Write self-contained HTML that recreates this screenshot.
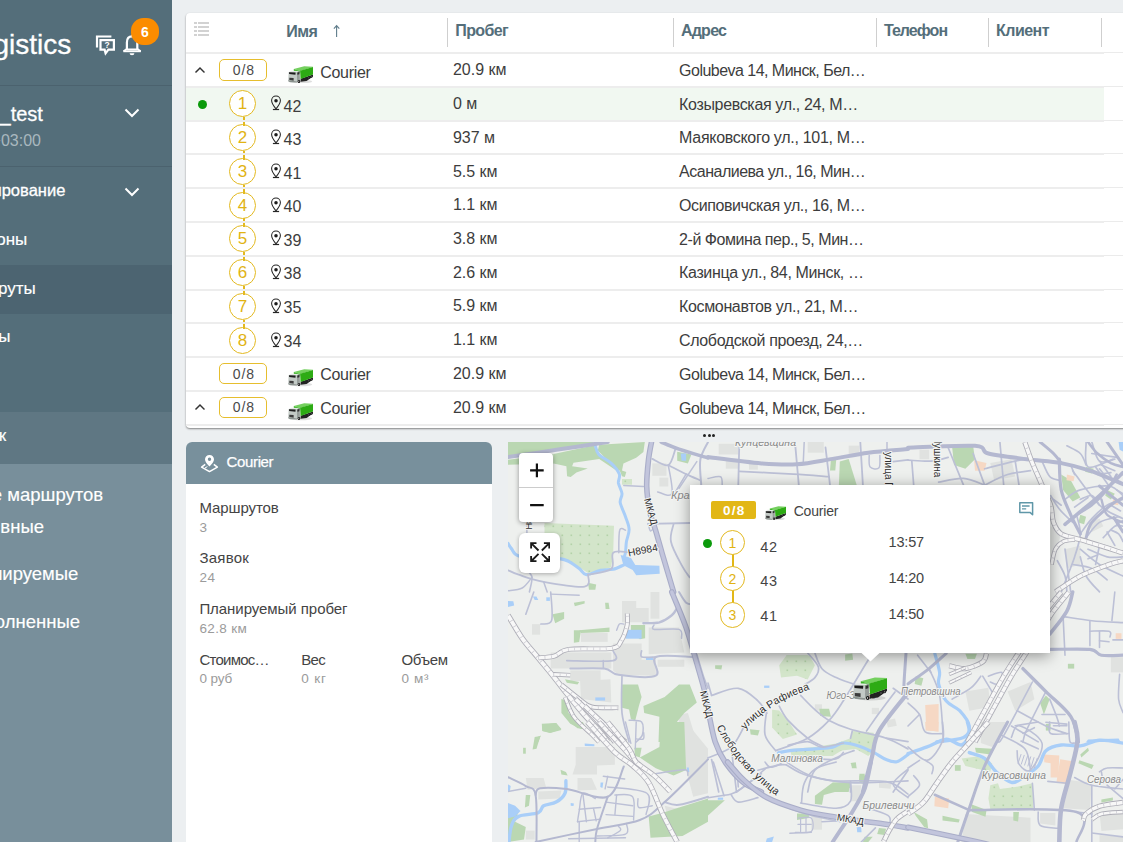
<!DOCTYPE html>
<html><head><meta charset="utf-8">
<style>
*{box-sizing:border-box;margin:0;padding:0}
html,body{width:1123px;height:842px;overflow:hidden;background:#eceff1;font-family:"Liberation Sans",sans-serif;color:#3a3a3a}
.abs{position:absolute}
.t{position:absolute;white-space:nowrap;line-height:1}
#side{position:absolute;left:0;top:0;width:172px;height:842px;background:#546e7a;overflow:hidden}
#side .t{color:#fff;-webkit-text-stroke:0.3px #fff}
#card{position:absolute;left:186px;top:13px;width:960px;height:414.8px;background:#fff;border-radius:4px;box-shadow:0 1px 2px rgba(0,0,0,.45)}
#card .t{color:#3d3d3d}
#card .h{color:#546e7a}
.vs{position:absolute;top:4.5px;width:1px;height:29.5px;background:#cfcfcf}
.sep{position:absolute;left:0;width:918px;height:2px;background:#ededed}
.sep2{position:absolute;left:918px;width:60px;height:1px;background:#ebebeb}
.badge{position:absolute;left:33px;width:48px;height:21.4px;border:1.8px solid #e6be2e;border-radius:5px}
.circ{position:absolute;width:27px;height:27px;border:1.5px solid #e3b920;border-radius:50%;background:#fff}
#panel{position:absolute;left:186px;top:442px;width:306px;height:420px;background:#fff;border-radius:6px 6px 0 0;overflow:hidden}
#panel .ph{position:absolute;left:0;top:0;width:306px;height:42px;background:#78909c}
#panel .l{color:#444}
#panel .v{color:#9b9b9b}
#map{position:absolute;left:508px;top:442px;width:615px;height:400px;background:#eef0ee;overflow:hidden}
#pop{position:absolute;left:690px;top:486px;width:360px;height:167px;background:#fff;box-shadow:0 3px 14px rgba(0,0,0,.4)}
</style></head><body>
<div id="side">
<div class="abs" style="left:0;top:264.7px;width:172px;height:49px;background:#4c6471"></div>
<div class="abs" style="left:0;top:411.5px;width:172px;height:53px;background:#5f7783"></div>
<div class="abs" style="left:0;top:464px;width:172px;height:400px;background:#788f9b"></div>
<div class="abs" style="left:0;top:84.5px;width:172px;height:1px;background:#4b626e"></div>
<div class="abs" style="left:0;top:165.5px;width:172px;height:1px;background:#4b626e"></div>
<div class="t" style="right:100.8px;top:31.0px;font-size:28px;">Logistics</div>
<div class="t" style="right:129.1px;top:104.0px;font-size:20px;">logistics_test</div>
<div class="t" style="right:131.0px;top:133.0px;font-size:16px;color:#a9b8bf;-webkit-text-stroke:0">UTC+03:00</div>
<div class="t" style="right:106.7px;top:182.0px;font-size:16.5px;">Планирование</div>
<div class="t" style="right:144.7px;top:231.0px;font-size:17px;-webkit-text-stroke:0.15px #fff">Районы</div>
<div class="t" style="right:136.2px;top:280.0px;font-size:17px;-webkit-text-stroke:0.15px #fff">Маршруты</div>
<div class="t" style="right:161.5px;top:328.0px;font-size:17px;-webkit-text-stroke:0.15px #fff">Заказы</div>
<div class="t" style="right:165.8px;top:427.0px;font-size:17px;-webkit-text-stroke:0.15px #fff">Поиск</div>
<div class="t" style="right:68.9px;top:486.0px;font-size:18.5px;-webkit-text-stroke:0.15px #fff">Состояние маршрутов</div>
<div class="t" style="right:128.0px;top:518.0px;font-size:18.5px;-webkit-text-stroke:0.15px #fff">Активные</div>
<div class="t" style="right:93.6px;top:565.0px;font-size:18.5px;-webkit-text-stroke:0.15px #fff">Планируемые</div>
<div class="t" style="right:92.0px;top:613.0px;font-size:18.5px;-webkit-text-stroke:0.15px #fff">Выполненные</div>
<svg class="abs" style="left:123px;top:106px" width="18" height="14" viewBox="0 0 18 14"><path d="M2.5 3.5 L9 10 L15.5 3.5" fill="none" stroke="#fff" stroke-width="2"/></svg>
<svg class="abs" style="left:123px;top:184.8px" width="18" height="14" viewBox="0 0 18 14"><path d="M2.5 3.5 L9 10 L15.5 3.5" fill="none" stroke="#fff" stroke-width="2"/></svg>
<svg class="abs" style="left:90px;top:12px" width="75" height="50" viewBox="90 12 75 50"><g fill="none" stroke="#fff" stroke-width="2.2"><path d="M97 47.4 V36.5 H111.4"/><path d="M100.5 40.1 H113.9 V49.6 H108.4 L105.6 53.3 L104.6 49.6 H100.5 Z" stroke-linejoin="miter"/><path d="M126.9 50 V42.5 C126.9 38.6 129 36.3 132.1 36.3 C135.2 36.3 137.3 38.6 137.3 42.5 V50"/><path d="M123.6 51.2 L126.2 49.4 H138 L140.6 51.2" stroke-width="2"/></g><path d="M123.3 50.4 H140.9 V52.2 H123.3 Z" fill="#fff"/><path d="M129.6 53.3 H134.4 A2.4 2 0 0 1 129.6 53.3 Z" fill="#fff"/><circle cx="132.1" cy="35.5" r="1.1" fill="#fff"/><text x="107.1" y="48.2" font-size="8.5" font-weight="bold" fill="#fff" text-anchor="middle" font-family="Liberation Sans, sans-serif">?</text></svg>
<div class="abs" style="left:131.2px;top:18.3px;width:27.6px;height:27.2px;border-radius:12.5px;background:#fb8c00"></div>
<div class="t" style="left:131.2px;width:27.6px;text-align:center;top:25px;font-size:14px;font-weight:bold;-webkit-text-stroke:0">6</div>
</div>
<div id="card">
<div class="abs" style="left:8.2px;top:8.5px;width:2.4px;height:2px;background:#d2d2d2"></div><div class="abs" style="left:12.0px;top:8.5px;width:11.2px;height:2px;background:#d2d2d2"></div>
<div class="abs" style="left:8.2px;top:12.7px;width:2.4px;height:2px;background:#d2d2d2"></div><div class="abs" style="left:12.0px;top:12.7px;width:11.2px;height:2px;background:#d2d2d2"></div>
<div class="abs" style="left:8.2px;top:16.9px;width:2.4px;height:2px;background:#d2d2d2"></div><div class="abs" style="left:12.0px;top:16.9px;width:11.2px;height:2px;background:#d2d2d2"></div>
<div class="abs" style="left:8.2px;top:21.1px;width:2.4px;height:2px;background:#d2d2d2"></div><div class="abs" style="left:12.0px;top:21.1px;width:11.2px;height:2px;background:#d2d2d2"></div>
<div class="t h" style="left:100.2px;top:11.00px;font-size:16px;letter-spacing:-0.536px;font-weight:700;">Имя</div>
<svg class="abs" style="left:146px;top:11.0px" width="10" height="14" viewBox="0 0 10 14"><path d="M4.6 13 V1.8 M1.9 4.6 L4.6 1.6 L7.3 4.6" fill="none" stroke="#607d8b" stroke-width="1.1"/></svg>
<div class="t h" style="left:269.3px;top:10.00px;font-size:16px;letter-spacing:-0.620px;font-weight:700;">Пробег</div>
<div class="t h" style="left:494.9px;top:10.00px;font-size:16px;letter-spacing:-0.745px;font-weight:700;">Адрес</div>
<div class="t h" style="left:697.9px;top:10.00px;font-size:16px;letter-spacing:-0.959px;font-weight:700;">Телефон</div>
<div class="t h" style="left:810.1px;top:10.00px;font-size:16px;letter-spacing:-0.534px;font-weight:700;">Клиент</div>
<div class="vs" style="left:261.1px"></div>
<div class="vs" style="left:486.9px"></div>
<div class="vs" style="left:689.6px"></div>
<div class="vs" style="left:802.0px"></div>
<div class="vs" style="left:915.0px"></div>
<div class="abs" style="left:0;top:74.8px;width:918px;height:31.8px;background:#f1f8f1"></div>
<div class="t " style="left:266.9px;top:49.00px;font-size:16px;letter-spacing:0.000px;">20.9 км</div>
<div class="t " style="left:493.1px;top:50.00px;font-size:16px;letter-spacing:-0.527px;">Golubeva 14, Минск, Бел…</div>
<svg class="abs" style="left:8.4px;top:52.5px" width="12" height="8" viewBox="0 0 12 8"><path d="M1.5 6.6 L6 2 L10.5 6.6" fill="none" stroke="#333" stroke-width="1.4"/></svg>
<div class="badge" style="top:46.3px"></div>
<div class="t " style="left:46.7px;top:50.00px;font-size:14px;letter-spacing:0.916px;color:#4a4a4a">0/8</div>
<svg class="abs" style="left:101.7px;top:52.7px" width="25.4" height="17.6" viewBox="0 0 766 535" preserveAspectRatio="none">
<ellipse cx="400" cy="470" rx="330" ry="55" fill="#000" opacity=".13"/>
<polygon points="380,390 765,255 765,312 560,455 380,482" fill="#222"/>
<polygon points="175,95 490,10 765,25 370,150" fill="#74d05e"/>
<polygon points="365,145 765,28 765,258 380,392" fill="#2dab14"/>
<polygon points="175,95 370,150 370,215 175,180" fill="#3db528"/>
<polygon points="25,175 100,142 355,152 270,192" fill="#e3e8e5"/>
<polygon points="20,185 270,190 270,482 60,472 5,440" fill="#c3cac6"/>
<polygon points="270,190 355,152 360,470 270,482" fill="#969d99"/>
<polygon points="30,192 230,197 225,264 35,247" fill="#1c1c1c"/>
<polygon points="282,202 345,177 345,252 282,267" fill="#2e2e2e"/>
<polygon points="40,355 170,365 170,447 40,427" fill="#3c3c3c"/>
<polygon points="5,432 270,472 270,505 60,492 5,462" fill="#8a928e"/>
<ellipse cx="330" cy="468" rx="38" ry="46" fill="#101010"/><ellipse cx="326" cy="468" rx="14" ry="21" fill="#c4c4c4"/>
<ellipse cx="630" cy="358" rx="30" ry="37" fill="#222"/><ellipse cx="627" cy="358" rx="12" ry="17" fill="#8a8a8a"/>
<ellipse cx="712" cy="328" rx="28" ry="35" fill="#222"/><ellipse cx="709" cy="328" rx="11" ry="16" fill="#8a8a8a"/>
</svg>
<div class="t " style="left:134.2px;top:52.00px;font-size:16px;letter-spacing:-0.295px;">Courier</div>
<div class="t " style="left:266.9px;top:83.00px;font-size:16px;letter-spacing:0.000px;">0 м</div>
<div class="t " style="left:493.1px;top:84.00px;font-size:16px;letter-spacing:-0.340px;">Козыревская ул., 24, М…</div>
<div class="circ" style="left:43.0px;top:77.2px"></div>
<div class="t" style="left:43.0px;width:27px;text-align:center;top:82px;font-size:17px;color:#e1b313">1</div>
<svg class="abs" style="left:83.6px;top:82.2px" width="12" height="16" viewBox="0 0 12 16"><path d="M6 1 C3.5 1 1.6 3 1.6 5.6 C1.6 8.8 6 13.8 6 13.8 C6 13.8 10.4 8.8 10.4 5.6 C10.4 3 8.5 1 6 1 Z" fill="none" stroke="#262626" stroke-width="1.05"/><circle cx="6" cy="5.7" r="1.75" fill="#1a1a1a"/><path d="M2.9 14.5 H9.1" stroke="#262626" stroke-width="1.2"/></svg>
<div class="t " style="left:97.6px;top:86.00px;font-size:16px;letter-spacing:0.000px;">42</div>
<div class="abs" style="left:12.0px;top:86.9px;width:9.2px;height:9.2px;border-radius:50%;background:#0b9a0b"></div>
<div class="t " style="left:266.9px;top:117.00px;font-size:16px;letter-spacing:0.000px;">937 м</div>
<div class="t " style="left:493.1px;top:117.00px;font-size:16px;letter-spacing:-0.300px;">Маяковского ул., 101, М…</div>
<div class="circ" style="left:43.0px;top:111.0px"></div>
<div class="t" style="left:43.0px;width:27px;text-align:center;top:116px;font-size:17px;color:#e1b313">2</div>
<svg class="abs" style="left:83.6px;top:116.0px" width="12" height="16" viewBox="0 0 12 16"><path d="M6 1 C3.5 1 1.6 3 1.6 5.6 C1.6 8.8 6 13.8 6 13.8 C6 13.8 10.4 8.8 10.4 5.6 C10.4 3 8.5 1 6 1 Z" fill="none" stroke="#262626" stroke-width="1.05"/><circle cx="6" cy="5.7" r="1.75" fill="#1a1a1a"/><path d="M2.9 14.5 H9.1" stroke="#262626" stroke-width="1.2"/></svg>
<div class="t " style="left:97.6px;top:119.00px;font-size:16px;letter-spacing:0.000px;">43</div>
<div class="t " style="left:266.9px;top:151.00px;font-size:16px;letter-spacing:0.000px;">5.5 км</div>
<div class="t " style="left:493.1px;top:151.00px;font-size:16px;letter-spacing:-0.502px;">Асаналиева ул., 16, Мин…</div>
<div class="circ" style="left:43.0px;top:144.8px"></div>
<div class="t" style="left:43.0px;width:27px;text-align:center;top:150px;font-size:17px;color:#e1b313">3</div>
<svg class="abs" style="left:83.6px;top:149.8px" width="12" height="16" viewBox="0 0 12 16"><path d="M6 1 C3.5 1 1.6 3 1.6 5.6 C1.6 8.8 6 13.8 6 13.8 C6 13.8 10.4 8.8 10.4 5.6 C10.4 3 8.5 1 6 1 Z" fill="none" stroke="#262626" stroke-width="1.05"/><circle cx="6" cy="5.7" r="1.75" fill="#1a1a1a"/><path d="M2.9 14.5 H9.1" stroke="#262626" stroke-width="1.2"/></svg>
<div class="t " style="left:97.6px;top:153.00px;font-size:16px;letter-spacing:0.000px;">41</div>
<div class="t " style="left:266.9px;top:184.00px;font-size:16px;letter-spacing:0.000px;">1.1 км</div>
<div class="t " style="left:493.1px;top:185.00px;font-size:16px;letter-spacing:-0.423px;">Осиповичская ул., 16, М…</div>
<div class="circ" style="left:43.0px;top:178.6px"></div>
<div class="t" style="left:43.0px;width:27px;text-align:center;top:184px;font-size:17px;color:#e1b313">4</div>
<svg class="abs" style="left:83.6px;top:183.6px" width="12" height="16" viewBox="0 0 12 16"><path d="M6 1 C3.5 1 1.6 3 1.6 5.6 C1.6 8.8 6 13.8 6 13.8 C6 13.8 10.4 8.8 10.4 5.6 C10.4 3 8.5 1 6 1 Z" fill="none" stroke="#262626" stroke-width="1.05"/><circle cx="6" cy="5.7" r="1.75" fill="#1a1a1a"/><path d="M2.9 14.5 H9.1" stroke="#262626" stroke-width="1.2"/></svg>
<div class="t " style="left:97.6px;top:186.00px;font-size:16px;letter-spacing:0.000px;">40</div>
<div class="t " style="left:266.9px;top:218.00px;font-size:16px;letter-spacing:0.000px;">3.8 км</div>
<div class="t " style="left:493.1px;top:219.00px;font-size:16px;letter-spacing:-0.460px;">2-й Фомина пер., 5, Мин…</div>
<div class="circ" style="left:43.0px;top:212.4px"></div>
<div class="t" style="left:43.0px;width:27px;text-align:center;top:217px;font-size:17px;color:#e1b313">5</div>
<svg class="abs" style="left:83.6px;top:217.4px" width="12" height="16" viewBox="0 0 12 16"><path d="M6 1 C3.5 1 1.6 3 1.6 5.6 C1.6 8.8 6 13.8 6 13.8 C6 13.8 10.4 8.8 10.4 5.6 C10.4 3 8.5 1 6 1 Z" fill="none" stroke="#262626" stroke-width="1.05"/><circle cx="6" cy="5.7" r="1.75" fill="#1a1a1a"/><path d="M2.9 14.5 H9.1" stroke="#262626" stroke-width="1.2"/></svg>
<div class="t " style="left:97.6px;top:220.00px;font-size:16px;letter-spacing:0.000px;">39</div>
<div class="t " style="left:266.9px;top:252.00px;font-size:16px;letter-spacing:0.000px;">2.6 км</div>
<div class="t " style="left:493.1px;top:252.00px;font-size:16px;letter-spacing:-0.365px;">Казинца ул., 84, Минск, …</div>
<div class="circ" style="left:43.0px;top:246.2px"></div>
<div class="t" style="left:43.0px;width:27px;text-align:center;top:251px;font-size:17px;color:#e1b313">6</div>
<svg class="abs" style="left:83.6px;top:251.2px" width="12" height="16" viewBox="0 0 12 16"><path d="M6 1 C3.5 1 1.6 3 1.6 5.6 C1.6 8.8 6 13.8 6 13.8 C6 13.8 10.4 8.8 10.4 5.6 C10.4 3 8.5 1 6 1 Z" fill="none" stroke="#262626" stroke-width="1.05"/><circle cx="6" cy="5.7" r="1.75" fill="#1a1a1a"/><path d="M2.9 14.5 H9.1" stroke="#262626" stroke-width="1.2"/></svg>
<div class="t " style="left:97.6px;top:253.00px;font-size:16px;letter-spacing:0.000px;">38</div>
<div class="t " style="left:266.9px;top:285.00px;font-size:16px;letter-spacing:0.000px;">5.9 км</div>
<div class="t " style="left:493.1px;top:286.00px;font-size:16px;letter-spacing:-0.365px;">Космонавтов ул., 21, М…</div>
<div class="circ" style="left:43.0px;top:280.0px"></div>
<div class="t" style="left:43.0px;width:27px;text-align:center;top:285px;font-size:17px;color:#e1b313">7</div>
<svg class="abs" style="left:83.6px;top:285.0px" width="12" height="16" viewBox="0 0 12 16"><path d="M6 1 C3.5 1 1.6 3 1.6 5.6 C1.6 8.8 6 13.8 6 13.8 C6 13.8 10.4 8.8 10.4 5.6 C10.4 3 8.5 1 6 1 Z" fill="none" stroke="#262626" stroke-width="1.05"/><circle cx="6" cy="5.7" r="1.75" fill="#1a1a1a"/><path d="M2.9 14.5 H9.1" stroke="#262626" stroke-width="1.2"/></svg>
<div class="t " style="left:97.6px;top:287.00px;font-size:16px;letter-spacing:0.000px;">35</div>
<div class="t " style="left:266.9px;top:319.00px;font-size:16px;letter-spacing:0.000px;">1.1 км</div>
<div class="t " style="left:493.1px;top:320.00px;font-size:16px;letter-spacing:-0.397px;">Слободской проезд, 24,…</div>
<div class="circ" style="left:43.0px;top:313.8px"></div>
<div class="t" style="left:43.0px;width:27px;text-align:center;top:319px;font-size:17px;color:#e1b313">8</div>
<svg class="abs" style="left:83.6px;top:318.8px" width="12" height="16" viewBox="0 0 12 16"><path d="M6 1 C3.5 1 1.6 3 1.6 5.6 C1.6 8.8 6 13.8 6 13.8 C6 13.8 10.4 8.8 10.4 5.6 C10.4 3 8.5 1 6 1 Z" fill="none" stroke="#262626" stroke-width="1.05"/><circle cx="6" cy="5.7" r="1.75" fill="#1a1a1a"/><path d="M2.9 14.5 H9.1" stroke="#262626" stroke-width="1.2"/></svg>
<div class="t " style="left:97.6px;top:321.00px;font-size:16px;letter-spacing:0.000px;">34</div>
<div class="t " style="left:266.9px;top:353.00px;font-size:16px;letter-spacing:0.000px;">20.9 км</div>
<div class="t " style="left:493.1px;top:354.00px;font-size:16px;letter-spacing:-0.510px;">Golubeva 14, Минск, Бел…</div>
<div class="badge" style="top:349.8px"></div>
<div class="t " style="left:46.7px;top:354.00px;font-size:14px;letter-spacing:0.916px;color:#4a4a4a">0/8</div>
<svg class="abs" style="left:101.7px;top:356.2px" width="25.4" height="17.6" viewBox="0 0 766 535" preserveAspectRatio="none">
<ellipse cx="400" cy="470" rx="330" ry="55" fill="#000" opacity=".13"/>
<polygon points="380,390 765,255 765,312 560,455 380,482" fill="#222"/>
<polygon points="175,95 490,10 765,25 370,150" fill="#74d05e"/>
<polygon points="365,145 765,28 765,258 380,392" fill="#2dab14"/>
<polygon points="175,95 370,150 370,215 175,180" fill="#3db528"/>
<polygon points="25,175 100,142 355,152 270,192" fill="#e3e8e5"/>
<polygon points="20,185 270,190 270,482 60,472 5,440" fill="#c3cac6"/>
<polygon points="270,190 355,152 360,470 270,482" fill="#969d99"/>
<polygon points="30,192 230,197 225,264 35,247" fill="#1c1c1c"/>
<polygon points="282,202 345,177 345,252 282,267" fill="#2e2e2e"/>
<polygon points="40,355 170,365 170,447 40,427" fill="#3c3c3c"/>
<polygon points="5,432 270,472 270,505 60,492 5,462" fill="#8a928e"/>
<ellipse cx="330" cy="468" rx="38" ry="46" fill="#101010"/><ellipse cx="326" cy="468" rx="14" ry="21" fill="#c4c4c4"/>
<ellipse cx="630" cy="358" rx="30" ry="37" fill="#222"/><ellipse cx="627" cy="358" rx="12" ry="17" fill="#8a8a8a"/>
<ellipse cx="712" cy="328" rx="28" ry="35" fill="#222"/><ellipse cx="709" cy="328" rx="11" ry="16" fill="#8a8a8a"/>
</svg>
<div class="t " style="left:134.2px;top:354.00px;font-size:16px;letter-spacing:-0.295px;">Courier</div>
<div class="t " style="left:266.9px;top:387.00px;font-size:16px;letter-spacing:0.000px;">20.9 км</div>
<div class="t " style="left:493.1px;top:388.00px;font-size:16px;letter-spacing:-0.510px;">Golubeva 14, Минск, Бел…</div>
<svg class="abs" style="left:8.4px;top:389.8px" width="12" height="8" viewBox="0 0 12 8"><path d="M1.5 6.6 L6 2 L10.5 6.6" fill="none" stroke="#333" stroke-width="1.4"/></svg>
<div class="badge" style="top:383.6px"></div>
<div class="t " style="left:46.7px;top:387.00px;font-size:14px;letter-spacing:0.916px;color:#4a4a4a">0/8</div>
<svg class="abs" style="left:101.7px;top:390.0px" width="25.4" height="17.6" viewBox="0 0 766 535" preserveAspectRatio="none">
<ellipse cx="400" cy="470" rx="330" ry="55" fill="#000" opacity=".13"/>
<polygon points="380,390 765,255 765,312 560,455 380,482" fill="#222"/>
<polygon points="175,95 490,10 765,25 370,150" fill="#74d05e"/>
<polygon points="365,145 765,28 765,258 380,392" fill="#2dab14"/>
<polygon points="175,95 370,150 370,215 175,180" fill="#3db528"/>
<polygon points="25,175 100,142 355,152 270,192" fill="#e3e8e5"/>
<polygon points="20,185 270,190 270,482 60,472 5,440" fill="#c3cac6"/>
<polygon points="270,190 355,152 360,470 270,482" fill="#969d99"/>
<polygon points="30,192 230,197 225,264 35,247" fill="#1c1c1c"/>
<polygon points="282,202 345,177 345,252 282,267" fill="#2e2e2e"/>
<polygon points="40,355 170,365 170,447 40,427" fill="#3c3c3c"/>
<polygon points="5,432 270,472 270,505 60,492 5,462" fill="#8a928e"/>
<ellipse cx="330" cy="468" rx="38" ry="46" fill="#101010"/><ellipse cx="326" cy="468" rx="14" ry="21" fill="#c4c4c4"/>
<ellipse cx="630" cy="358" rx="30" ry="37" fill="#222"/><ellipse cx="627" cy="358" rx="12" ry="17" fill="#8a8a8a"/>
<ellipse cx="712" cy="328" rx="28" ry="35" fill="#222"/><ellipse cx="709" cy="328" rx="11" ry="16" fill="#8a8a8a"/>
</svg>
<div class="t " style="left:134.2px;top:388.00px;font-size:16px;letter-spacing:-0.295px;">Courier</div>
<div class="abs" style="left:57.1px;top:103.9px;width:2px;height:9.0px;background:#e3b920"></div>
<div class="abs" style="left:57.1px;top:137.7px;width:2px;height:9.0px;background:#e3b920"></div>
<div class="abs" style="left:57.1px;top:171.5px;width:2px;height:9.0px;background:#e3b920"></div>
<div class="abs" style="left:57.1px;top:205.3px;width:2px;height:9.0px;background:#e3b920"></div>
<div class="abs" style="left:57.1px;top:239.1px;width:2px;height:9.0px;background:#e3b920"></div>
<div class="abs" style="left:57.1px;top:272.9px;width:2px;height:9.0px;background:#e3b920"></div>
<div class="abs" style="left:57.1px;top:306.7px;width:2px;height:9.0px;background:#e3b920"></div>
<div class="sep" style="top:39.0px"></div><div class="sep2" style="top:39.0px"></div>
<div class="sep" style="top:72.8px"></div><div class="sep2" style="top:72.8px"></div>
<div class="sep" style="top:106.6px"></div><div class="sep2" style="top:106.6px"></div>
<div class="sep" style="top:140.4px"></div><div class="sep2" style="top:140.4px"></div>
<div class="sep" style="top:174.2px"></div><div class="sep2" style="top:174.2px"></div>
<div class="sep" style="top:208.0px"></div><div class="sep2" style="top:208.0px"></div>
<div class="sep" style="top:241.8px"></div><div class="sep2" style="top:241.8px"></div>
<div class="sep" style="top:275.6px"></div><div class="sep2" style="top:275.6px"></div>
<div class="sep" style="top:309.4px"></div><div class="sep2" style="top:309.4px"></div>
<div class="sep" style="top:343.2px"></div><div class="sep2" style="top:343.2px"></div>
<div class="sep" style="top:377.0px"></div><div class="sep2" style="top:377.0px"></div>
<div class="sep" style="top:410.8px"></div><div class="sep2" style="top:410.8px"></div>
</div>
<div id="panel">
<div class="ph"></div>
<svg class="abs" style="left:14px;top:12.4px" width="19" height="19" viewBox="0 0 19 19"><path d="M9.5 0.9 C6.9 0.9 5 2.8 5 5.3 C5 8.4 9.5 12.6 9.5 12.6 C9.5 12.6 14 8.4 14 5.3 C14 2.8 12.1 0.9 9.5 0.9 Z M9.5 3.6 A1.7 1.7 0 1 1 9.5 7 A1.7 1.7 0 1 1 9.5 3.6 Z" fill="#fff" fill-rule="evenodd"/><path d="M5.2 10.4 L1.6 13.2 L9.5 17.6 L17.4 13.2 L13.8 10.4" fill="none" stroke="#fff" stroke-width="1.5" stroke-linejoin="round"/><path d="M5 14 L7.4 12.6" stroke="#fff" stroke-width="1"/></svg>
<div class="t " style="left:40.6px;top:12.00px;font-size:15px;letter-spacing:-0.365px;color:#fff;-webkit-text-stroke:0.25px #fff">Courier</div>
<div class="t l" style="left:13.4px;top:58.00px;font-size:15px;letter-spacing:-0.085px;">Маршрутов</div>
<div class="t v" style="left:13.4px;top:79.00px;font-size:13.5px;letter-spacing:0.000px;">3</div>
<div class="t l" style="left:13.4px;top:108.00px;font-size:15px;letter-spacing:0.253px;">Заявок</div>
<div class="t v" style="left:13.4px;top:129.00px;font-size:13.5px;letter-spacing:0.669px;">24</div>
<div class="t l" style="left:13.4px;top:159.00px;font-size:15px;letter-spacing:-0.052px;">Планируемый пробег</div>
<div class="t v" style="left:13.4px;top:180.00px;font-size:13.5px;letter-spacing:0.364px;">62.8 км</div>
<div class="t l" style="left:13.4px;top:210.00px;font-size:15px;letter-spacing:-0.746px;">Стоимос…</div>
<div class="t l" style="left:115.2px;top:210.00px;font-size:15px;letter-spacing:-0.580px;">Вес</div>
<div class="t l" style="left:215.5px;top:210.00px;font-size:15px;letter-spacing:-0.299px;">Объем</div>
<div class="t v" style="left:13.4px;top:230.00px;font-size:13.5px;letter-spacing:-0.088px;">0 руб</div>
<div class="t v" style="left:115.2px;top:230.00px;font-size:13.5px;letter-spacing:0.869px;">0 кг</div>
<div class="t v" style="left:215.5px;top:230.00px;font-size:13.5px;letter-spacing:0.651px;">0 м³</div>
</div>
<div id="map"><svg width="615" height="400" viewBox="508 442 615 400" style="position:absolute;left:0;top:0">
<defs><pattern id="dots" width="9" height="9" patternUnits="userSpaceOnUse"><rect width="9" height="9" fill="#d3e5ca"/><rect x="3.5" y="3.5" width="1.6" height="1.6" fill="#b3d2a8"/></pattern></defs>
<rect x="508" y="442" width="615" height="400" fill="#eef0ee"/>
<path d="M516.5,445.9 L530.8,444.5 L529.4,449.8 L518.0,450.9Z" fill="#e0e2e0"/>
<path d="M652.3,463.4 L666.5,463.4 L666.5,475.8 L652.3,475.8Z" fill="#e0e2e0"/>
<path d="M659.4,477.6 L668.3,477.6 L668.3,486.5 L659.4,486.5Z" fill="#e0e2e0"/>
<path d="M718.7,443.8 L738.3,443.8 L738.3,454.5 L718.7,454.5Z" fill="#e0e2e0"/>
<path d="M725.8,458.9 L738.3,458.9 L738.3,468.7 L725.8,468.7Z" fill="#e0e2e0"/>
<path d="M807.7,442.0 L823.8,442.0 L823.8,452.7 L807.7,452.7Z" fill="#e0e2e0"/>
<path d="M749.0,462.5 L757.9,462.5 L757.9,469.6 L749.0,469.6Z" fill="#e0e2e0"/>
<path d="M848.7,445.6 L859.4,445.6 L859.4,454.5 L848.7,454.5Z" fill="#e0e2e0"/>
<path d="M919.5,449.7 L929.1,449.7 L929.1,459.2 L919.5,459.2Z" fill="#e0e2e0"/>
<path d="M990.3,463.1 L1011.4,459.2 L1015.2,476.5 L994.2,480.3Z" fill="#e0e2e0"/>
<path d="M1088.0,522.4 L1099.5,518.6 L1103.3,526.2 L1091.8,532.0Z" fill="#e0e2e0"/>
<path d="M1050.6,526.2 L1061.2,532.0 L1057.3,549.2 L1050.6,556.9Z" fill="#e0e2e0"/>
<path d="M1065.0,549.2 L1080.3,545.4 L1080.3,564.5 L1066.9,568.4Z" fill="#e0e2e0"/>
<path d="M581.0,633.0 L607.7,633.0 L607.7,641.9 L581.0,641.9Z" fill="#e0e2e0"/>
<path d="M622.0,600.9 L636.2,600.9 L636.2,608.0 L648.7,608.0 L648.7,622.3 L622.0,622.3Z" fill="#e0e2e0"/>
<path d="M650.5,592.0 L659.4,592.0 L659.4,618.7 L650.5,618.7Z" fill="#e0e2e0"/>
<path d="M550.7,652.6 L611.3,652.6 L611.3,668.6 L550.7,668.6Z" fill="#e0e2e0"/>
<path d="M613.1,643.6 L641.6,643.6 L641.6,659.7 L655.8,659.7 L655.8,675.7 L618.4,674.8 L613.1,670.4Z" fill="#e0e2e0"/>
<path d="M648.7,627.6 L679.0,627.6 L684.3,652.6 L648.7,654.3Z" fill="#e0e2e0"/>
<path d="M580.1,681.0 L610.4,679.3 L611.3,702.4 L581.0,698.9Z" fill="#e0e2e0"/>
<path d="M570.3,670.4 L600.6,670.4 L600.6,681.0 L570.3,681.0Z" fill="#e0e2e0"/>
<path d="M657.6,659.7 L684.3,659.7 L684.3,666.8 L657.6,666.8Z" fill="#e0e2e0"/>
<path d="M532.0,624.1 L540.1,624.1 L540.1,634.7 L532.0,634.7Z" fill="#e0e2e0"/>
<path d="M677.2,714.9 L687.9,713.1 L696.8,742.0 L684.3,742.0Z" fill="#e0e2e0"/>
<path d="M814.9,704.3 L822.0,704.3 L822.0,710.6 L814.9,710.6Z" fill="#e0e2e0"/>
<path d="M871.8,707.9 L879.0,707.9 L879.0,714.1 L871.8,714.1Z" fill="#e0e2e0"/>
<path d="M886.1,720.4 L895.0,718.6 L896.8,725.7 L887.9,727.5Z" fill="#e0e2e0"/>
<path d="M965.4,691.6 L988.4,687.7 L990.3,706.9 L969.3,710.7Z" fill="#e0e2e0"/>
<path d="M1007.6,691.6 L1030.5,682.0 L1034.4,699.2 L1015.2,710.7Z" fill="#e0e2e0"/>
<path d="M1110.9,657.1 L1123.0,657.1 L1123.0,672.4 L1110.9,672.4Z" fill="#e0e2e0"/>
<path d="M575.7,746.9 L614.9,746.9 L614.9,764.7 L597.0,765.6 L597.0,774.5 L572.5,774.5 L575.7,764.7Z" fill="#e0e2e0"/>
<path d="M525.8,778.1 L543.6,778.1 L546.3,787.9 L527.6,789.7Z" fill="#e0e2e0"/>
<path d="M577.5,778.1 L591.7,778.1 L597.0,789.7 L577.5,790.6Z" fill="#e0e2e0"/>
<path d="M538.3,791.5 L561.4,790.6 L559.6,798.6 L538.3,799.5Z" fill="#e0e2e0"/>
<path d="M664.7,805.7 L679.0,809.3 L681.6,818.2 L668.3,819.1Z" fill="#e0e2e0"/>
<path d="M677.2,722.0 L686.1,722.0 L708.0,748.7 L708.0,793.2 L693.2,796.8 L686.1,770.1Z" fill="#e0e2e0"/>
<path d="M525.8,830.6 L534.7,830.6 L534.7,839.5 L525.8,839.5Z" fill="#e0e2e0"/>
<path d="M850.5,785.2 L861.2,785.2 L859.4,801.2 L850.5,801.2Z" fill="#e0e2e0"/>
<path d="M811.3,815.4 L822.0,815.4 L822.0,829.7 L811.3,829.7Z" fill="#e0e2e0"/>
<path d="M879.0,782.5 L891.4,783.4 L890.5,788.7 L879.0,787.8Z" fill="#e0e2e0"/>
<path d="M965.4,813.9 L1030.5,817.7 L1030.5,842.0 L961.6,842.0Z" fill="#e0e2e0"/>
<path d="M1040.1,812.9 L1055.4,812.9 L1055.4,825.4 L1040.1,823.5Z" fill="#e0e2e0"/>
<path d="M1066.9,779.4 L1091.8,783.3 L1089.9,810.1 L1063.1,808.2Z" fill="#e0e2e0"/>
<path d="M1099.5,812.0 L1123.0,813.9 L1123.0,829.2 L1101.4,831.1Z" fill="#e0e2e0"/>
<path d="M980.8,722.0 L1007.6,722.0 L992.2,746.9 L980.8,743.1Z" fill="#e0e2e0"/>
<path d="M1099.5,835.0 L1123.0,836.9 L1123.0,842.0 L1099.5,842.0Z" fill="#e0e2e0"/>
<path d="M508.0,442.0 L597.0,442.0 L561.4,449.1 L508.0,457.1Z" fill="#bad7b2"/>
<path d="M553.6,454.1 L593.5,445.6 L597.8,452.0 L607.7,460.5 L616.3,466.2 L622.0,463.4 L622.0,470.5 L616.3,470.5 L599.2,459.1 L573.5,462.7 L572.1,466.2 L587.8,468.4 L576.4,472.6 L570.7,476.9 L567.1,476.2 L566.4,466.2 L553.6,463.4Z" fill="#bad7b2"/>
<path d="M508.0,459.8 L553.6,454.1 L553.6,463.4 L508.0,464.8Z" fill="#bad7b2"/>
<path d="M599.2,444.8 L644.8,442.0 L643.4,452.0 L636.2,457.7 L623.4,463.4 L622.0,470.5 L626.3,471.9 L624.8,476.9 L622.0,476.2 L619.1,469.1 L607.7,460.5 L597.8,450.5Z" fill="#bad7b2"/>
<path d="M588.1,582.7 L596.2,584.5 L595.3,589.8 L589.0,589.8Z" fill="#bad7b2"/>
<path d="M677.2,451.8 L691.4,454.5 L687.9,463.4 L677.2,460.7Z" fill="#bad7b2"/>
<path d="M839.8,461.6 L848.7,458.9 L856.7,485.1 L838.9,485.1Z" fill="#bad7b2"/>
<path d="M830.9,459.8 L836.2,459.8 L835.3,470.5 L830.0,470.5Z" fill="#bad7b2"/>
<path d="M952.0,445.8 L973.1,445.8 L975.0,459.2 L965.4,468.8 L954.0,465.0Z" fill="#bad7b2"/>
<path d="M1061.2,474.5 L1070.7,480.3 L1080.3,497.5 L1072.7,501.4 L1063.1,489.9Z" fill="#bad7b2"/>
<path d="M1080.3,514.8 L1086.1,516.7 L1084.1,524.3 L1078.4,522.4Z" fill="#bad7b2"/>
<path d="M1107.1,489.9 L1114.8,493.7 L1110.9,499.4 L1105.2,495.6Z" fill="#bad7b2"/>
<path d="M1086.1,466.9 L1093.7,468.8 L1091.8,473.6 L1085.1,471.7Z" fill="#bad7b2"/>
<path d="M622.0,684.6 L638.0,684.6 L641.6,697.1 L638.9,706.0 L635.3,720.2 L630.9,719.3 L629.1,709.5 L622.0,707.8Z" fill="#bad7b2"/>
<path d="M643.4,706.0 L664.7,697.1 L679.0,684.6 L689.7,684.6 L696.8,702.4 L684.3,713.1 L675.4,723.8 L683.4,742.0 L658.5,742.0 L659.4,716.7 L644.2,713.1Z" fill="#bad7b2"/>
<path d="M561.4,698.9 L566.8,700.6 L568.6,713.1 L586.4,729.1 L581.0,729.1 L570.3,723.8 L561.4,713.1Z" fill="#bad7b2"/>
<path d="M542.7,724.7 L556.1,722.9 L561.4,729.1 L550.7,732.7 L542.7,730.9Z" fill="#bad7b2"/>
<path d="M552.5,614.3 L564.1,611.9 L564.1,618.7 L555.2,623.2Z" fill="#bad7b2"/>
<path d="M573.9,630.3 L581.0,630.3 L579.2,641.9 L573.9,642.8Z" fill="#bad7b2"/>
<path d="M579.2,630.3 L609.5,627.6 L609.5,632.1 L581.0,633.0Z" fill="#bad7b2"/>
<path d="M605.1,602.7 L608.6,602.7 L609.5,608.9 L605.6,608.9Z" fill="#bad7b2"/>
<path d="M573.9,602.7 L584.6,600.9 L584.6,603.6 L574.8,606.2Z" fill="#bad7b2"/>
<path d="M565.0,679.3 L579.2,681.9 L577.5,684.6 L566.8,682.8Z" fill="#bad7b2"/>
<path d="M535.6,738.0 L540.9,735.4 L538.3,742.0 L534.7,742.0Z" fill="#bad7b2"/>
<path d="M630.9,624.9 L645.1,624.9 L645.1,638.3 L639.8,639.2 L630.9,630.3Z" fill="#bad7b2"/>
<path d="M786.4,655.4 L807.7,655.4 L811.3,661.6 L786.4,662.5Z" fill="#bad7b2"/>
<path d="M776.6,720.4 L786.4,720.4 L793.5,734.6 L781.0,734.6Z" fill="#bad7b2"/>
<path d="M819.3,708.8 L829.1,708.8 L830.9,716.8 L820.2,715.9Z" fill="#bad7b2"/>
<path d="M715.1,665.2 L722.2,665.2 L721.4,669.6 L715.1,668.7Z" fill="#bad7b2"/>
<path d="M749.9,729.3 L759.6,730.2 L757.9,735.5 L750.7,734.6Z" fill="#bad7b2"/>
<path d="M845.1,654.5 L852.3,653.6 L853.1,659.8 L845.1,660.7Z" fill="#bad7b2"/>
<path d="M859.4,773.8 L864.7,773.8 L864.7,784.5 L859.4,782.7Z" fill="#bad7b2"/>
<path d="M832.7,782.7 L850.5,782.7 L848.7,792.0 L825.5,792.0Z" fill="#bad7b2"/>
<path d="M850.5,763.1 L855.8,762.2 L856.7,768.4 L852.3,766.7Z" fill="#bad7b2"/>
<path d="M915.7,676.2 L923.3,678.2 L921.4,685.8 L914.7,683.9Z" fill="#bad7b2"/>
<path d="M1067.9,663.8 L1074.2,663.8 L1074.2,668.6 L1067.9,668.6Z" fill="#bad7b2"/>
<path d="M1040.1,703.0 L1045.9,695.4 L1049.7,699.2 L1043.9,714.5Z" fill="#bad7b2"/>
<path d="M965.4,653.7 L976.9,653.7 L975.0,659.0 L967.4,659.0Z" fill="#bad7b2"/>
<path d="M1045.9,724.1 L1049.7,724.1 L1049.7,729.9 L1045.9,729.9Z" fill="#bad7b2"/>
<path d="M639.8,757.6 L659.4,746.9 L661.2,722.0 L684.3,722.0 L686.1,770.1 L673.6,775.4 L655.8,768.3Z" fill="#bad7b2"/>
<path d="M648.7,816.4 L662.9,812.8 L679.0,807.5 L708.0,798.6 L708.0,821.7 L682.5,836.0 L650.5,837.8Z" fill="#bad7b2"/>
<path d="M541.8,723.8 L556.1,722.9 L561.4,730.0 L549.9,733.0 L542.2,730.9Z" fill="#bad7b2"/>
<path d="M534.7,737.1 L540.4,735.9 L536.5,748.7 L532.6,749.6Z" fill="#bad7b2"/>
<path d="M523.1,747.8 L525.8,747.8 L525.8,753.7 L523.1,753.7Z" fill="#bad7b2"/>
<path d="M508.0,807.5 L518.7,811.0 L515.1,821.7 L525.8,827.1 L524.0,839.5 L508.0,842.0Z" fill="#bad7b2"/>
<path d="M525.8,795.0 L530.3,795.0 L529.0,805.7 L524.9,807.5Z" fill="#bad7b2"/>
<path d="M560.5,769.7 L565.9,771.9 L567.7,775.4 L561.4,774.5Z" fill="#bad7b2"/>
<path d="M569.4,722.0 L582.8,722.0 L586.4,729.1 L577.5,728.2Z" fill="#bad7b2"/>
<path d="M634.4,747.8 L641.6,747.8 L639.8,757.6 L634.8,755.8Z" fill="#bad7b2"/>
<path d="M708.0,800.3 L724.9,800.3 L708.0,815.4Z" fill="#bad7b2"/>
<path d="M832.7,782.5 L850.5,782.5 L850.5,787.8 L823.8,794.9 L822.0,804.7 L814.9,803.9 L814.9,795.8Z" fill="#bad7b2"/>
<path d="M859.4,775.4 L865.6,775.4 L864.7,781.6 L859.0,780.7Z" fill="#bad7b2"/>
<path d="M797.0,813.6 L809.5,813.6 L808.6,818.1 L797.0,819.9Z" fill="#bad7b2"/>
<path d="M879.0,827.9 L886.1,828.8 L884.3,835.0 L877.2,834.1Z" fill="#bad7b2"/>
<path d="M864.7,836.8 L872.7,836.8 L868.3,842.0 L862.9,842.0Z" fill="#bad7b2"/>
<path d="M851.4,764.7 L855.8,762.9 L855.8,768.2 L851.9,768.2Z" fill="#bad7b2"/>
<path d="M975.0,747.8 L992.2,748.8 L990.3,754.5 L976.0,752.6Z" fill="#bad7b2"/>
<path d="M954.9,765.1 L960.7,765.1 L960.7,770.8 L954.9,770.8Z" fill="#bad7b2"/>
<path d="M971.2,804.3 L986.5,810.1 L985.5,816.8 L972.1,812.0Z" fill="#bad7b2"/>
<path d="M1013.3,812.0 L1019.0,812.0 L1018.1,821.6 L1013.3,820.6Z" fill="#bad7b2"/>
<path d="M942.5,815.8 L959.7,819.6 L958.7,822.5 L942.5,820.6Z" fill="#bad7b2"/>
<path d="M913.7,812.0 L927.1,819.6 L928.1,828.3 L924.3,827.3 L915.7,815.8Z" fill="#bad7b2"/>
<path d="M1079.4,760.3 L1093.7,765.1 L1091.8,768.9 L1078.4,763.2Z" fill="#bad7b2"/>
<path d="M1080.3,754.5 L1088.0,747.8 L1088.9,750.7 L1081.3,757.4Z" fill="#bad7b2"/>
<path d="M1045.9,723.9 L1050.6,723.9 L1050.6,730.6 L1045.9,730.6Z" fill="#bad7b2"/>
<path d="M1101.4,799.5 L1112.9,797.6 L1112.9,800.5 L1101.4,802.4Z" fill="#bad7b2"/>
<path d="M622.0,479.0 L632.0,479.0 L632.0,484.7 L622.0,484.7Z" fill="url(#dots)"/>
<path d="M544.5,523.0 L614.0,525.7 L613.1,556.0 L610.9,567.6 L588.1,572.9 L578.3,566.7 L567.7,560.4 L544.5,556.0Z" fill="url(#dots)"/>
<path d="M786.4,655.4 L809.5,655.4 L814.9,665.2 L807.7,679.4 L797.0,675.8 L781.0,677.6 L779.2,665.2Z" fill="url(#dots)"/>
<path d="M789.9,748.9 L814.9,747.1 L836.2,743.5 L850.5,738.2 L852.3,731.0 L873.6,732.8 L875.4,748.9 L868.3,756.0 L855.8,748.9 L841.6,750.6 L832.7,756.0 L791.7,756.0Z" fill="url(#dots)"/>
<path d="M772.1,709.7 L779.2,710.6 L788.1,720.4 L797.0,734.6 L782.8,739.1 L772.1,727.5Z" fill="url(#dots)"/>
<path d="M990.3,785.2 L998.0,783.3 L999.9,789.0 L1015.2,787.1 L1032.4,783.3 L1033.4,810.1 L990.3,809.1 L988.4,798.6Z" fill="url(#dots)"/>
<path d="M961.6,758.4 L976.9,756.5 L992.2,763.2 L990.3,771.8 L965.4,766.0Z" fill="url(#dots)"/>
<path d="M974.1,460.2 L986.5,463.1 L984.6,470.7 L975.0,470.7Z" fill="#f6d8c4"/>
<path d="M1066.9,474.5 L1074.6,476.5 L1073.6,481.2 L1066.5,480.3Z" fill="#f6d8c4"/>
<path d="M1112.9,499.4 L1118.6,500.4 L1118.2,505.2 L1112.5,504.2Z" fill="#f6d8c4"/>
<path d="M925.2,705.0 L938.6,704.0 L938.6,731.8 L926.2,729.9Z" fill="#f6d8c4"/>
<path d="M1115.7,633.2 L1121.5,633.2 L1121.5,638.9 L1115.7,638.9Z" fill="#f6d8c4"/>
<path d="M1043.9,754.5 L1059.3,755.5 L1058.3,777.5 L1050.6,777.5 L1050.6,763.2 L1044.3,762.2Z" fill="#f6d8c4"/>
<path d="M1060.2,759.3 L1072.7,761.2 L1066.9,784.2 L1056.4,782.3Z" fill="#f6d8c4"/>
<path d="M934.8,796.7 L949.2,798.6 L948.2,808.2 L934.4,806.2Z" fill="#f6d8c4"/>
<path d="M925.2,722.0 L938.6,722.0 L937.7,731.2 L925.6,730.6Z" fill="#f6d8c4"/>
<path d="M620.6,555.1 L630.9,557.8 L635.3,564.9 L659.4,565.8 L659.7,573.8 L636.2,575.2 L632.7,569.9 L623.4,565.2Z" fill="#a9cef8"/>
<path d="M680.8,453.6 L686.1,453.6 L686.1,460.7 L681.6,460.7Z" fill="#a9cef8"/>
<path d="M1118.6,442.0 L1123.0,442.0 L1123.0,451.6 L1119.6,449.7Z" fill="#a9cef8"/>
<path d="M625.5,629.8 L641.6,629.8 L641.6,638.7 L625.5,638.7Z" fill="#a9cef8"/>
<path d="M508.0,600.9 L513.3,601.3 L514.2,605.4 L508.0,607.1Z" fill="#a9cef8"/>
<path d="M595.3,697.4 L605.1,697.4 L605.1,700.6 L595.3,700.6Z" fill="#a9cef8"/>
<path d="M532.9,596.5 L536.5,596.5 L538.3,600.0 L534.7,600.0Z" fill="#a9cef8"/>
<path d="M546.3,597.3 L549.9,597.3 L549.9,600.9 L546.3,600.9Z" fill="#a9cef8"/>
<path d="M646.0,657.9 L653.1,657.9 L653.1,660.0 L646.0,660.0Z" fill="#a9cef8"/>
<path d="M764.1,685.6 L769.4,685.6 L769.4,687.9 L764.1,687.9Z" fill="#a9cef8"/>
<path d="M1088.0,739.4 L1118.6,738.5 L1120.5,741.9 L1086.1,741.9Z" fill="#a9cef8"/>
<path d="M508.0,803.0 L515.1,805.7 L520.5,811.0 L515.1,816.4 L508.0,818.2Z" fill="#a9cef8"/>
<path d="M508.0,784.3 L510.7,786.1 L509.8,791.5 L508.0,791.8Z" fill="#a9cef8"/>
<path d="M584.6,743.4 L594.4,744.3 L594.4,746.2 L584.9,745.9Z" fill="#a9cef8"/>
<path d="M600.6,782.6 L603.3,782.6 L602.4,787.9 L600.3,787.0Z" fill="#a9cef8"/>
<path d="M570.7,803.0 L573.9,803.6 L573.5,806.1 L570.7,805.7Z" fill="#a9cef8"/>
<path d="M686.6,767.4 L688.8,767.4 L689.3,771.9 L687.0,771.9Z" fill="#a9cef8"/>
<path d="M856.7,827.0 L861.2,827.0 L861.5,832.3 L857.2,832.3Z" fill="#a9cef8"/>
<path d="M766.8,838.6 L773.9,836.4 L772.1,842.0 L765.9,842.0Z" fill="#a9cef8"/>
<path d="M717.8,797.6 L723.1,797.6 L723.1,799.8 L717.8,799.8Z" fill="#a9cef8"/>
<g fill="none" stroke-linecap="round" stroke-linejoin="round">
<path d="M595.3,445.6 C595.9,447.0 596.2,451.5 598.8,454.5 C601.5,457.4 607.9,460.1 611.3,463.4 C614.7,466.6 618.1,470.8 619.3,474.1 C620.5,477.3 618.0,479.7 618.4,483.0 C618.9,486.2 621.7,490.4 622.0,493.6 C622.3,496.9 619.6,498.7 620.2,502.6 C620.8,506.4 624.1,512.3 625.5,516.8 C627.0,521.3 629.0,525.1 629.1,529.3 C629.3,533.4 627.0,537.9 626.4,541.7 C625.8,545.6 626.0,549.7 625.5,552.4 C625.1,555.1 624.1,556.9 623.8,557.8" stroke="#a9cef8" stroke-width="3"/>
<path d="M623.8,564.9 C622.0,565.6 616.9,568.4 613.1,569.3 C609.2,570.2 605.1,569.3 600.6,570.2 C596.2,571.1 589.9,575.0 586.4,574.7 C582.8,574.4 582.2,570.7 579.2,568.4 C576.3,566.2 571.8,563.0 568.6,561.3 C565.3,559.7 563.8,559.2 559.6,558.7 C555.5,558.1 550.4,558.2 543.6,557.8 C536.8,557.3 524.0,557.5 518.7,556.0 C513.3,554.5 513.3,550.9 511.6,548.9 C509.8,546.8 508.6,544.4 508.0,543.5" stroke="#a9cef8" stroke-width="3.2"/>
<path d="M778.3,752.8 C780.3,752.4 783.8,751.3 789.9,750.6 C796.0,750.0 807.7,749.5 814.9,748.9 C822.0,748.3 827.9,748.1 832.7,747.1 C837.4,746.1 838.9,743.1 843.4,743.0 C847.8,742.8 854.3,744.6 859.4,746.2 C864.4,747.8 869.2,750.2 873.6,752.4 C878.1,754.6 882.2,758.0 886.1,759.5 C890.0,761.1 893.1,762.5 896.8,761.7 C900.4,760.8 906.1,755.7 908.0,754.6" stroke="#a9cef8" stroke-width="3.2"/>
<path d="M934.8,653.3 C935.6,656.5 939.0,667.3 939.6,672.4 C940.2,677.5 937.5,679.1 938.6,683.9 C939.8,688.7 942.8,696.7 946.3,701.1 C949.8,705.6 955.9,706.6 959.7,710.7 C963.5,714.9 968.6,721.6 969.3,726.0 C969.9,730.5 968.9,734.9 963.5,737.5 C958.1,740.2 941.2,741.2 936.7,741.9" stroke="#a9cef8" stroke-width="3.2"/>
<path d="M565.9,780.8 C565.7,782.8 566.6,789.7 565.0,793.2 C563.4,796.8 559.6,800.1 556.1,802.1 C552.5,804.2 546.6,803.9 543.6,805.7 C540.7,807.5 542.4,811.0 538.3,812.8 C534.1,814.6 523.1,814.3 518.7,816.4 C514.2,818.5 513.2,821.0 511.6,825.3 C509.9,829.6 509.3,839.2 508.9,842.0" stroke="#a9cef8" stroke-width="3.4"/>
<path d="M967.4,722.0 C967.7,723.9 970.2,729.7 969.3,733.5 C968.3,737.3 965.4,744.0 961.6,745.0 C957.8,745.9 952.0,738.9 946.3,739.2 C940.5,739.6 933.5,744.5 927.1,746.9 C920.8,749.3 911.2,752.5 908.0,753.6" stroke="#a9cef8" stroke-width="3.4"/>
<path d="M969.3,752.6 C971.8,753.6 980.1,755.2 984.6,758.4 C989.1,761.6 991.6,767.8 996.1,771.8 C1000.5,775.8 1006.9,781.4 1011.4,782.3 C1015.9,783.3 1018.4,780.2 1022.9,777.5 C1027.3,774.8 1034.4,770.5 1038.2,766.0 C1042.0,761.6 1042.0,754.2 1045.9,750.7 C1049.7,747.2 1055.4,745.8 1061.2,745.0 C1066.9,744.2 1073.9,746.7 1080.3,745.9 C1086.7,745.1 1092.3,740.7 1099.5,740.2 C1106.6,739.7 1119.1,742.6 1123.0,743.1" stroke="#a9cef8" stroke-width="3.4"/>
<path d="M588.1,574.7 C592.0,573.7 607.1,572.5 611.3,568.8 C615.5,565.2 610.3,555.6 613.1,552.8 C615.8,550.0 625.2,552.2 627.7,552.1" stroke="#bcc0d6" stroke-width="1.8"/>
<path d="M618.8,552.8 C618.9,549.0 618.5,533.9 619.7,530.2 C620.8,526.4 624.6,530.2 625.5,530.2" stroke="#bcc0d6" stroke-width="1.5"/>
<path d="M508.0,570.2 C509.8,571.0 512.7,572.8 518.7,574.7 C524.6,576.6 532.6,579.8 543.6,581.8 C554.6,583.8 577.2,587.8 584.6,586.6 C592.0,585.4 587.5,576.7 588.1,574.7" stroke="#bcc0d6" stroke-width="1.8"/>
<path d="M529.4,592.0 C529.8,589.5 532.3,581.6 532.0,577.4 C531.8,573.1 528.8,575.9 527.9,566.7 C527.1,557.5 526.9,529.6 526.7,522.1" stroke="#bcc0d6" stroke-width="1.6"/>
<path d="M543.6,581.8 L547.2,592.0" stroke="#bcc0d6" stroke-width="1.5"/>
<path d="M508.0,590.7 C510.4,590.3 518.2,590.3 522.2,588.0 C526.3,585.8 530.4,579.1 532.0,577.4" stroke="#bcc0d6" stroke-width="1.5"/>
<path d="M623.8,485.6 L643.4,486.5" stroke="#bcc0d6" stroke-width="1.5"/>
<path d="M647.8,523.9 L689.7,523.0" stroke="#bcc0d6" stroke-width="1.8"/>
<path d="M673.6,523.9 C673.2,526.9 669.5,534.6 671.0,541.7 C672.4,548.9 679.4,560.7 682.5,566.7 C685.6,572.6 688.5,575.6 689.7,577.4" stroke="#bcc0d6" stroke-width="1.8"/>
<path d="M654.4,527.5 C653.7,528.1 651.4,531.3 650.5,531.0 C649.5,530.8 649.0,526.6 648.7,525.7" stroke="#bcc0d6" stroke-width="1.5"/>
<path d="M708.0,442.0 C706.7,445.0 701.5,452.7 700.3,459.8 C699.2,466.9 701.1,480.6 701.2,484.7" stroke="#bcc0d6" stroke-width="2"/>
<path d="M675.4,449.1 C674.2,451.8 672.1,463.5 668.3,465.2 C664.4,466.8 654.9,460.0 652.3,458.9" stroke="#bcc0d6" stroke-width="1.8"/>
<path d="M668.3,465.2 C671.3,466.6 680.8,471.5 686.1,474.1 C691.4,476.6 698.0,479.3 700.3,480.3" stroke="#bcc0d6" stroke-width="1.8"/>
<path d="M686.1,474.1 L675.4,491.9" stroke="#bcc0d6" stroke-width="1.5"/>
<path d="M696.8,461.6 L679.0,488.3" stroke="#bcc0d6" stroke-width="1.5"/>
<path d="M668.3,465.2 C668.9,469.9 673.6,489.2 671.8,493.6 C670.1,498.1 660.0,492.2 657.6,491.9" stroke="#bcc0d6" stroke-width="1.5"/>
<path d="M739.2,447.3 L738.3,485.1" stroke="#bcc0d6" stroke-width="1.8"/>
<path d="M795.3,445.6 L798.8,485.1" stroke="#bcc0d6" stroke-width="1.8"/>
<path d="M804.2,442.0 L803.3,461.6" stroke="#bcc0d6" stroke-width="1.5"/>
<path d="M825.5,447.3 L830.0,485.1" stroke="#bcc0d6" stroke-width="1.8"/>
<path d="M860.3,442.0 L862.9,485.1" stroke="#bcc0d6" stroke-width="1.8"/>
<path d="M887.0,442.0 L887.0,450.9" stroke="#bcc0d6" stroke-width="1.5"/>
<path d="M739.2,471.4 C748.2,471.8 778.5,473.2 793.5,474.1 C808.5,474.9 823.2,476.3 829.1,476.7" stroke="#bcc0d6" stroke-width="1.8"/>
<path d="M708.0,478.5 C710.1,478.2 718.1,475.6 720.5,476.7 C722.8,477.8 722.0,483.7 722.2,485.1" stroke="#bcc0d6" stroke-width="1.5"/>
<path d="M869.2,455.4 C869.3,457.3 868.4,464.9 870.1,466.9 C871.7,469.0 877.3,469.8 879.0,467.8 C880.6,465.9 879.7,457.4 879.9,455.4" stroke="#bcc0d6" stroke-width="1.5"/>
<path d="M893.2,461.6 L908.0,459.8" stroke="#bcc0d6" stroke-width="1.8"/>
<path d="M948.2,447.7 L963.5,485.1" stroke="#bcc0d6" stroke-width="1.7"/>
<path d="M911.8,461.1 L913.7,485.1" stroke="#bcc0d6" stroke-width="1.7"/>
<path d="M973.1,453.5 L984.6,485.1" stroke="#bcc0d6" stroke-width="1.7"/>
<path d="M999.9,442.0 L1003.7,485.1" stroke="#bcc0d6" stroke-width="1.7"/>
<path d="M1015.2,461.1 L1019.0,485.1" stroke="#bcc0d6" stroke-width="1.7"/>
<path d="M984.6,468.8 C989.7,467.5 1007.6,462.7 1015.2,461.1 C1022.9,459.6 1028.0,459.6 1030.5,459.2" stroke="#bcc0d6" stroke-width="1.7"/>
<path d="M1072.7,470.7 C1077.1,476.5 1091.1,497.2 1099.5,505.2 C1107.9,513.2 1119.1,516.4 1123.0,518.6" stroke="#bcc0d6" stroke-width="1.7"/>
<path d="M1086.1,442.0 C1086.4,446.1 1083.5,464.0 1088.0,466.9 C1092.4,469.8 1108.7,460.5 1112.9,459.2" stroke="#bcc0d6" stroke-width="1.7"/>
<path d="M1065.0,499.4 C1067.6,497.8 1073.0,492.1 1080.3,489.9 C1087.7,487.6 1101.9,485.1 1109.0,486.0 C1116.1,487.0 1120.7,494.0 1123.0,495.6" stroke="#bcc0d6" stroke-width="1.7"/>
<path d="M1109.0,486.0 L1095.6,466.9" stroke="#bcc0d6" stroke-width="1.7"/>
<path d="M1080.3,533.9 C1082.2,531.3 1087.3,523.4 1091.8,518.6 C1096.3,513.8 1101.9,508.4 1107.1,505.2 C1112.3,502.0 1120.4,500.4 1123.0,499.4" stroke="#bcc0d6" stroke-width="1.7"/>
<path d="M1086.1,537.7 C1088.3,535.2 1094.0,525.9 1099.5,522.4 C1104.9,518.9 1115.4,517.6 1118.6,516.7" stroke="#bcc0d6" stroke-width="1.7"/>
<path d="M1103.3,537.7 C1105.2,535.8 1111.5,528.2 1114.8,526.2 C1118.1,524.3 1121.6,526.2 1123.0,526.2" stroke="#bcc0d6" stroke-width="1.7"/>
<path d="M908.0,460.2 C911.8,460.3 924.3,461.6 931.0,461.1 C937.7,460.7 945.3,458.0 948.2,457.3" stroke="#bcc0d6" stroke-width="1.7"/>
<path d="M938.6,482.2 C942.8,481.6 955.9,477.9 963.5,478.4 C971.2,478.9 981.1,484.0 984.6,485.1" stroke="#bcc0d6" stroke-width="1.7"/>
<path d="M984.6,485.1 C988.4,483.3 999.9,476.9 1007.6,474.5 C1015.2,472.2 1026.7,471.4 1030.5,470.7" stroke="#bcc0d6" stroke-width="1.7"/>
<path d="M1076.5,514.8 C1077.1,517.9 1080.6,526.9 1080.3,533.9 C1080.0,540.9 1077.8,547.2 1074.6,556.9 C1071.4,566.5 1063.4,586.1 1061.2,591.9" stroke="#bcc0d6" stroke-width="1.7"/>
<path d="M1065.0,549.2 L1070.7,591.9" stroke="#bcc0d6" stroke-width="1.7"/>
<path d="M1080.3,549.2 C1083.5,551.8 1092.3,560.1 1099.5,564.5 C1106.6,569.0 1119.1,574.1 1123.0,576.0" stroke="#bcc0d6" stroke-width="1.7"/>
<path d="M1091.8,442.0 C1093.1,445.2 1095.6,458.3 1099.5,461.1 C1103.3,464.0 1112.2,459.6 1114.8,459.2" stroke="#bcc0d6" stroke-width="1.7"/>
<path d="M1099.5,461.1 L1110.9,476.5" stroke="#bcc0d6" stroke-width="1.7"/>
<path d="M1050.6,495.6 C1052.1,497.8 1055.6,504.5 1059.3,509.0 C1062.9,513.5 1070.4,520.2 1072.7,522.4" stroke="#bcc0d6" stroke-width="1.7"/>
<path d="M1050.6,518.6 L1061.2,532.0" stroke="#bcc0d6" stroke-width="1.7"/>
<path d="M1088.0,549.2 C1091.2,550.5 1101.3,555.6 1107.1,556.9 C1113.0,558.2 1120.4,556.9 1123.0,556.9" stroke="#bcc0d6" stroke-width="1.7"/>
<path d="M1099.5,545.4 L1095.6,564.5" stroke="#bcc0d6" stroke-width="1.7"/>
<path d="M1091.8,453.5 L1116.7,457.3" stroke="#bcc0d6" stroke-width="1.7"/>
<path d="M1101.4,465.0 L1114.8,470.7" stroke="#bcc0d6" stroke-width="1.7"/>
<path d="M1099.5,468.8 L1107.1,478.4" stroke="#bcc0d6" stroke-width="1.7"/>
<path d="M1097.5,474.5 L1110.9,472.6" stroke="#bcc0d6" stroke-width="1.7"/>
<path d="M1080.3,499.4 C1082.2,498.8 1088.6,494.7 1091.8,495.6 C1095.0,496.6 1098.2,503.6 1099.5,505.2" stroke="#bcc0d6" stroke-width="1.7"/>
<path d="M1074.6,507.1 L1088.0,497.5" stroke="#bcc0d6" stroke-width="1.7"/>
<path d="M1116.7,489.9 L1123.0,493.7" stroke="#bcc0d6" stroke-width="1.7"/>
<path d="M1110.9,505.2 L1120.5,510.9" stroke="#bcc0d6" stroke-width="1.7"/>
<path d="M1116.7,524.3 L1123.0,520.5" stroke="#bcc0d6" stroke-width="1.7"/>
<path d="M1110.9,530.1 C1112.2,530.7 1116.6,532.0 1118.6,533.9 C1120.6,535.8 1122.3,540.3 1123.0,541.6" stroke="#bcc0d6" stroke-width="1.7"/>
<path d="M1107.1,532.0 L1114.8,545.4" stroke="#bcc0d6" stroke-width="1.7"/>
<path d="M1057.3,560.7 C1058.6,563.3 1063.4,570.8 1065.0,576.0 C1066.6,581.2 1066.6,589.3 1066.9,591.9" stroke="#bcc0d6" stroke-width="1.7"/>
<path d="M1080.3,556.9 C1081.3,560.1 1082.9,570.2 1086.1,576.0 C1089.2,581.9 1097.2,589.3 1099.5,591.9" stroke="#bcc0d6" stroke-width="1.7"/>
<path d="M1072.7,564.5 C1075.8,565.2 1086.1,565.8 1091.8,568.4 C1097.5,570.9 1104.6,577.9 1107.1,579.9" stroke="#bcc0d6" stroke-width="1.7"/>
<path d="M1088.0,558.8 L1097.5,555.0" stroke="#bcc0d6" stroke-width="1.7"/>
<path d="M1053.5,499.4 L1061.2,505.2" stroke="#bcc0d6" stroke-width="1.7"/>
<path d="M1070.7,465.0 L1074.6,474.5" stroke="#bcc0d6" stroke-width="1.7"/>
<path d="M1042.0,461.1 C1043.3,463.7 1046.8,473.3 1049.7,476.5 C1052.6,479.7 1057.7,479.7 1059.3,480.3" stroke="#bcc0d6" stroke-width="1.7"/>
<path d="M1066.9,445.8 C1069.1,447.1 1077.1,450.3 1080.3,453.5 C1083.5,456.7 1085.1,463.1 1086.1,465.0" stroke="#bcc0d6" stroke-width="1.7"/>
<path d="M570.3,668.6 C576.0,668.6 596.2,667.5 604.2,668.6 C612.2,669.6 609.8,673.6 618.4,674.8 C627.0,676.0 649.6,678.7 655.8,675.7 C662.1,672.7 649.6,660.1 655.8,657.0 C662.1,653.9 687.0,657.0 693.2,657.0" stroke="#bcc0d6" stroke-width="2"/>
<path d="M641.6,650.8 C641.6,651.8 639.6,656.0 641.9,657.0 C644.3,658.0 653.5,657.0 655.8,657.0" stroke="#bcc0d6" stroke-width="1.7"/>
<path d="M622.0,675.7 C622.0,681.9 620.8,702.1 622.0,713.1 C623.2,724.1 627.9,737.1 629.1,742.0" stroke="#bcc0d6" stroke-width="1.7"/>
<path d="M566.8,660.6 C574.5,660.6 605.4,662.2 613.1,660.6 C620.8,658.9 613.1,652.4 613.1,650.8" stroke="#bcc0d6" stroke-width="1.7"/>
<path d="M550.7,592.0 C550.9,596.7 553.3,615.2 551.6,620.5 C550.0,625.8 542.7,623.5 540.9,624.1" stroke="#bcc0d6" stroke-width="1.6"/>
<path d="M525.8,614.3 L533.8,592.0" stroke="#bcc0d6" stroke-width="1.6"/>
<path d="M550.7,594.1 L579.2,595.2" stroke="#bcc0d6" stroke-width="1.4"/>
<path d="M643.4,623.2 C646.0,623.0 654.6,623.6 659.4,622.3 C664.1,620.9 668.9,617.5 671.8,615.2 C674.8,612.8 676.3,609.2 677.2,608.0" stroke="#bcc0d6" stroke-width="2.4"/>
<path d="M654.0,624.9 C654.1,625.7 650.2,628.7 654.4,629.4 C658.5,630.1 674.4,627.9 679.0,629.4 C683.5,630.9 681.2,636.8 681.6,638.3" stroke="#bcc0d6" stroke-width="1.5"/>
<path d="M603.3,660.6 L603.3,668.6" stroke="#bcc0d6" stroke-width="1.5"/>
<path d="M629.1,720.2 C631.2,720.5 639.3,719.6 641.6,722.0 C643.8,724.4 643.4,731.2 642.5,734.5 C641.6,737.8 637.3,740.7 636.2,742.0" stroke="#bcc0d6" stroke-width="1.5"/>
<path d="M616.6,630.3 C617.1,629.3 618.1,625.1 619.3,624.1 C620.5,623.0 623.0,624.1 623.8,624.1" stroke="#bcc0d6" stroke-width="1.4"/>
<path d="M679.0,592.0 C680.2,593.8 683.7,600.6 686.1,602.7 C688.5,604.8 692.0,604.2 693.2,604.5" stroke="#bcc0d6" stroke-width="2"/>
<path d="M696.8,654.3 C698.0,658.2 702.0,671.8 703.9,677.5 C705.8,683.1 707.3,686.4 708.0,688.2" stroke="#bcc0d6" stroke-width="1.6"/>
<path d="M814.9,653.0 C816.0,655.7 818.4,664.6 822.0,668.7 C825.5,672.8 830.6,674.9 836.2,677.6 C841.9,680.3 850.5,683.1 855.8,684.7 C861.2,686.4 866.2,687.0 868.3,687.4" stroke="#bcc0d6" stroke-width="1.7"/>
<path d="M766.8,709.7 C766.5,713.8 763.5,727.8 765.0,734.6 C766.5,741.4 773.9,748.0 775.7,750.6" stroke="#bcc0d6" stroke-width="1.7"/>
<path d="M711.6,695.4 C716.0,694.2 730.6,687.4 738.3,688.3 C746.0,689.2 753.1,696.6 757.9,700.8 C762.6,704.9 765.3,711.2 766.8,713.2" stroke="#bcc0d6" stroke-width="1.7"/>
<path d="M779.2,706.1 C780.7,708.5 783.4,715.0 788.1,720.4 C792.9,725.7 801.8,733.7 807.7,738.2 C813.7,742.6 821.1,745.6 823.8,747.1" stroke="#bcc0d6" stroke-width="1.7"/>
<path d="M800.6,695.4 C803.0,697.8 810.1,705.5 814.9,709.7 C819.6,713.8 823.2,717.1 829.1,720.4 C835.0,723.6 841.0,726.3 850.5,729.3 C860.0,732.2 876.5,734.9 886.1,738.2 C895.7,741.4 904.3,747.1 908.0,748.9" stroke="#bcc0d6" stroke-width="1.7"/>
<path d="M775.7,750.6 C781.0,748.6 798.8,743.2 807.7,738.2 C816.6,733.1 823.2,726.6 829.1,720.4 C835.0,714.1 836.8,710.9 843.4,700.8 C849.9,690.7 864.1,666.6 868.3,659.8" stroke="#bcc0d6" stroke-width="1.7"/>
<path d="M708.0,757.8 C711.9,756.0 725.2,752.1 731.2,747.1 C737.1,742.0 741.5,730.8 743.6,727.5" stroke="#bcc0d6" stroke-width="1.7"/>
<path d="M807.7,792.0 C808.9,788.3 809.5,776.2 814.9,770.2 C820.2,764.2 833.3,759.2 839.8,756.0 C846.3,752.7 851.7,751.5 854.0,750.6" stroke="#bcc0d6" stroke-width="1.7"/>
<path d="M786.4,764.9 C789.9,766.7 797.0,772.6 807.7,775.6 C818.4,778.5 833.8,781.8 850.5,782.7 C867.2,783.6 898.4,781.2 908.0,780.9" stroke="#bcc0d6" stroke-width="1.7"/>
<path d="M866.5,731.0 C868.6,728.1 874.2,719.8 879.0,713.2 C883.7,706.7 892.3,695.4 895.0,691.9" stroke="#bcc0d6" stroke-width="1.7"/>
<path d="M807.7,653.0 C809.5,655.4 817.2,662.8 818.4,666.9 C819.6,671.0 817.2,674.7 814.9,677.6 C812.5,680.6 806.0,683.6 804.2,684.7" stroke="#bcc0d6" stroke-width="1.7"/>
<path d="M711.6,695.4 L708.0,683.0" stroke="#bcc0d6" stroke-width="1.7"/>
<path d="M731.2,747.1 L736.5,792.0" stroke="#bcc0d6" stroke-width="1.7"/>
<path d="M711.6,759.5 L718.7,792.0" stroke="#bcc0d6" stroke-width="1.7"/>
<path d="M788.1,745.3 C791.4,744.7 802.1,741.4 807.7,741.7 C813.4,742.0 816.0,746.9 822.0,747.1 C827.9,747.3 839.8,743.7 843.4,743.0" stroke="#bcc0d6" stroke-width="1.7"/>
<path d="M791.7,756.0 C798.5,756.6 824.1,760.1 832.7,759.5 C841.3,758.9 841.6,753.6 843.4,752.4" stroke="#bcc0d6" stroke-width="1.7"/>
<path d="M850.5,782.7 L850.5,792.0" stroke="#bcc0d6" stroke-width="1.7"/>
<path d="M886.1,738.2 L908.0,741.7" stroke="#bcc0d6" stroke-width="1.7"/>
<path d="M893.2,792.0 L908.0,770.2" stroke="#bcc0d6" stroke-width="1.7"/>
<path d="M757.9,770.2 C761.4,769.3 774.5,765.8 779.2,764.9 C784.0,764.0 785.2,764.9 786.4,764.9" stroke="#bcc0d6" stroke-width="1.7"/>
<path d="M736.5,792.0 L761.4,773.8" stroke="#bcc0d6" stroke-width="1.7"/>
<path d="M852.3,731.0 L850.5,738.2" stroke="#bcc0d6" stroke-width="1.7"/>
<path d="M893.2,688.3 L908.0,699.0" stroke="#bcc0d6" stroke-width="1.7"/>
<path d="M1063.1,616.9 L1065.0,655.2" stroke="#bcc0d6" stroke-width="1.6"/>
<path d="M1065.0,616.9 C1069.5,617.5 1082.1,619.8 1091.8,620.7 C1101.5,621.7 1117.8,622.3 1123.0,622.6" stroke="#bcc0d6" stroke-width="1.6"/>
<path d="M1114.8,592.0 L1111.9,620.7" stroke="#bcc0d6" stroke-width="1.6"/>
<path d="M1089.9,620.7 L1089.9,645.6" stroke="#bcc0d6" stroke-width="1.6"/>
<path d="M1089.9,631.2 C1093.1,631.2 1105.7,630.3 1109.0,631.2 C1112.4,632.2 1109.8,636.0 1110.0,637.0" stroke="#bcc0d6" stroke-width="1.6"/>
<path d="M1099.5,631.2 L1099.5,647.5" stroke="#bcc0d6" stroke-width="1.6"/>
<path d="M1099.5,640.8 L1109.0,641.8" stroke="#bcc0d6" stroke-width="1.6"/>
<path d="M1112.9,639.9 L1123.0,639.9" stroke="#bcc0d6" stroke-width="1.6"/>
<path d="M1032.4,682.0 C1027.7,690.9 1009.5,725.6 1003.7,735.6 C998.0,745.6 998.9,740.9 998.0,741.9" stroke="#bcc0d6" stroke-width="1.6"/>
<path d="M1045.9,691.6 C1042.7,697.9 1030.5,721.5 1026.7,729.9 C1022.9,738.2 1023.5,739.9 1022.9,741.9" stroke="#bcc0d6" stroke-width="1.6"/>
<path d="M1017.1,710.7 C1021.9,713.3 1037.6,722.2 1045.9,726.0 C1054.1,729.9 1063.4,732.4 1066.9,733.7" stroke="#bcc0d6" stroke-width="1.6"/>
<path d="M1049.7,699.2 C1051.0,702.4 1055.7,713.9 1057.3,718.4 C1058.9,722.8 1058.9,724.7 1059.3,726.0" stroke="#bcc0d6" stroke-width="1.6"/>
<path d="M1042.0,714.5 L1065.0,714.5" stroke="#bcc0d6" stroke-width="1.6"/>
<path d="M1045.9,722.2 L1066.9,724.1" stroke="#bcc0d6" stroke-width="1.6"/>
<path d="M1011.4,726.0 L1038.2,741.9" stroke="#bcc0d6" stroke-width="1.6"/>
<path d="M908.0,703.0 C909.9,705.0 916.6,709.7 919.5,714.5 C922.4,719.3 921.4,728.6 925.2,731.8 C929.1,735.0 939.6,733.4 942.5,733.7" stroke="#bcc0d6" stroke-width="1.6"/>
<path d="M929.1,668.6 C930.8,673.1 937.2,683.2 939.6,695.4 C942.0,707.6 942.8,734.2 943.4,741.9" stroke="#bcc0d6" stroke-width="1.6"/>
<path d="M917.6,655.2 L931.0,672.4" stroke="#bcc0d6" stroke-width="1.6"/>
<path d="M980.8,676.2 C979.2,678.2 976.0,683.9 971.2,687.7 C966.4,691.6 955.2,697.3 952.0,699.2" stroke="#bcc0d6" stroke-width="1.6"/>
<path d="M988.4,676.2 C990.6,675.6 1000.2,671.1 1001.8,672.4 C1003.4,673.7 999.9,682.3 998.0,683.9 C996.1,685.5 991.6,682.3 990.3,682.0" stroke="#bcc0d6" stroke-width="1.6"/>
<path d="M1119.6,674.3 C1119.4,678.5 1118.0,692.8 1118.6,699.2 C1119.2,705.6 1122.3,710.4 1123.0,712.6" stroke="#bcc0d6" stroke-width="1.6"/>
<path d="M919.5,714.5 L908.0,726.0" stroke="#bcc0d6" stroke-width="1.6"/>
<path d="M982.7,676.2 L994.2,695.4" stroke="#bcc0d6" stroke-width="1.6"/>
<path d="M664.7,802.1 C667.1,802.6 671.8,805.7 679.0,804.8 C686.2,803.9 703.2,798.1 708.0,796.8" stroke="#bcc0d6" stroke-width="2"/>
<path d="M582.8,793.2 L586.4,821.7" stroke="#bcc0d6" stroke-width="1.4"/>
<path d="M579.2,809.3 L600.6,807.5" stroke="#bcc0d6" stroke-width="1.4"/>
<path d="M577.5,821.7 C577.8,820.0 578.3,815.8 579.2,811.0 C580.1,806.3 580.1,795.3 582.8,793.2 C585.5,791.2 593.2,797.7 595.3,798.6" stroke="#bcc0d6" stroke-width="1.4"/>
<path d="M579.2,821.7 L579.2,842.0" stroke="#bcc0d6" stroke-width="1.4"/>
<path d="M593.5,808.4 L596.2,820.8" stroke="#bcc0d6" stroke-width="1.4"/>
<path d="M614.9,795.0 C617.8,795.3 629.5,792.6 632.7,796.8 C635.8,801.0 633.4,816.1 633.6,820.0" stroke="#bcc0d6" stroke-width="1.4"/>
<path d="M616.6,795.0 L614.9,814.6" stroke="#bcc0d6" stroke-width="1.4"/>
<path d="M606.0,802.1 L632.7,805.7" stroke="#bcc0d6" stroke-width="1.4"/>
<path d="M606.0,814.6 L632.7,816.4" stroke="#bcc0d6" stroke-width="1.4"/>
<path d="M607.7,787.0 C614.3,788.0 640.5,788.6 646.9,793.2 C653.3,797.8 646.2,811.0 646.0,814.6" stroke="#bcc0d6" stroke-width="1.4"/>
<path d="M638.0,798.6 C638.2,800.1 636.5,806.3 638.9,807.5 C641.3,808.7 650.0,806.0 652.3,805.7" stroke="#bcc0d6" stroke-width="1.4"/>
<path d="M603.3,776.3 L624.7,779.0" stroke="#bcc0d6" stroke-width="1.4"/>
<path d="M607.7,776.3 L605.1,788.8" stroke="#bcc0d6" stroke-width="1.4"/>
<path d="M577.5,821.7 L600.6,819.1" stroke="#bcc0d6" stroke-width="1.4"/>
<path d="M597.0,836.0 C601.8,835.7 620.6,836.3 625.5,834.2 C630.4,832.1 626.3,825.3 626.4,823.5" stroke="#bcc0d6" stroke-width="1.4"/>
<path d="M568.6,838.7 L625.5,837.8" stroke="#bcc0d6" stroke-width="1.4"/>
<path d="M618.4,826.2 C618.7,826.9 622.0,828.7 620.2,830.6 C618.4,832.6 609.8,836.6 607.7,837.8" stroke="#bcc0d6" stroke-width="1.4"/>
<path d="M508.0,791.5 L525.8,788.3" stroke="#bcc0d6" stroke-width="1.4"/>
<path d="M655.8,773.6 C660.6,773.0 679.0,769.4 684.3,769.7 C689.7,770.0 687.3,774.5 687.9,775.4" stroke="#bcc0d6" stroke-width="1.4"/>
<path d="M625.5,722.0 L630.9,743.4" stroke="#bcc0d6" stroke-width="1.4"/>
<path d="M636.2,722.0 L635.3,748.7" stroke="#bcc0d6" stroke-width="1.4"/>
<path d="M636.2,738.9 C637.4,738.9 642.1,740.0 643.4,738.9 C644.6,737.9 643.6,733.7 643.7,732.7" stroke="#bcc0d6" stroke-width="1.4"/>
<path d="M734.7,767.3 C737.1,770.0 742.7,777.9 749.0,783.4 C755.2,788.9 762.9,795.2 772.1,800.3 C781.3,805.3 792.9,810.1 804.2,813.6 C815.5,817.2 833.9,820.3 839.8,821.7" stroke="#bcc0d6" stroke-width="1.6"/>
<path d="M713.3,762.0 L724.0,795.8" stroke="#bcc0d6" stroke-width="1.6"/>
<path d="M708.0,797.6 C711.9,797.0 725.2,795.8 731.2,794.1 C737.1,792.3 738.0,791.1 743.6,786.9 C749.3,782.8 761.4,772.1 765.0,769.1" stroke="#bcc0d6" stroke-width="1.6"/>
<path d="M731.2,794.9 C732.3,796.1 733.8,801.6 738.3,802.1 C742.7,802.5 754.6,798.4 757.9,797.6" stroke="#bcc0d6" stroke-width="1.6"/>
<path d="M786.4,762.0 C789.9,764.1 800.0,771.3 807.7,774.5 C815.5,777.6 819.6,779.5 832.7,780.7 C845.7,781.9 873.5,779.4 886.1,781.6 C898.7,783.8 904.3,792.0 908.0,794.1" stroke="#bcc0d6" stroke-width="1.6"/>
<path d="M836.2,762.0 C832.7,763.2 820.2,765.6 814.9,769.1 C809.5,772.7 806.4,777.7 804.2,783.4 C801.9,789.0 801.9,799.7 801.5,803.0" stroke="#bcc0d6" stroke-width="1.6"/>
<path d="M850.5,781.6 C850.5,784.9 852.9,796.7 850.5,801.2 C848.1,805.6 844.5,808.0 836.2,808.3 C827.9,808.6 806.5,803.9 800.6,803.0" stroke="#bcc0d6" stroke-width="1.6"/>
<path d="M908.0,769.1 C905.5,771.6 893.2,779.5 893.2,784.3 C893.2,789.0 905.5,795.4 908.0,797.6" stroke="#bcc0d6" stroke-width="1.6"/>
<path d="M862.9,806.5 C867.1,808.0 883.4,812.5 887.9,815.4 C892.3,818.4 889.4,822.8 889.7,824.3" stroke="#bcc0d6" stroke-width="1.6"/>
<path d="M789.9,833.2 L811.3,832.3" stroke="#bcc0d6" stroke-width="1.6"/>
<path d="M822.0,821.7 L839.8,820.8" stroke="#bcc0d6" stroke-width="1.6"/>
<path d="M861.2,842.0 L875.4,827.9" stroke="#bcc0d6" stroke-width="1.6"/>
<path d="M737.4,774.5 L738.3,786.9" stroke="#bcc0d6" stroke-width="1.6"/>
<path d="M765.0,762.0 C765.9,762.9 767.7,767.0 770.3,767.3 C773.0,767.6 779.2,764.4 781.0,763.8" stroke="#bcc0d6" stroke-width="1.6"/>
<path d="M797.9,818.1 C800.2,818.1 809.1,815.9 811.3,818.1 C813.5,820.3 814.0,829.1 811.3,831.5 C808.6,833.8 797.9,832.2 795.3,832.3" stroke="#bcc0d6" stroke-width="1.2"/>
<path d="M800.6,818.1 L800.6,831.5" stroke="#bcc0d6" stroke-width="1.2"/>
<path d="M806.0,818.1 L806.0,831.5" stroke="#bcc0d6" stroke-width="1.2"/>
<path d="M797.9,824.3 L811.3,824.3" stroke="#bcc0d6" stroke-width="1.2"/>
<path d="M908.0,746.9 C911.2,749.1 921.4,761.2 927.1,760.3 C932.9,759.3 939.9,747.5 942.5,741.1 C945.0,734.8 942.5,725.2 942.5,722.0" stroke="#bcc0d6" stroke-width="1.6"/>
<path d="M925.2,760.3 C926.5,761.2 931.8,763.8 932.9,766.0 C934.0,768.3 932.1,772.4 931.9,773.7" stroke="#bcc0d6" stroke-width="1.6"/>
<path d="M913.7,775.6 C914.7,777.2 920.4,781.7 919.5,785.2 C918.5,788.7 909.9,794.8 908.0,796.7" stroke="#bcc0d6" stroke-width="1.6"/>
<path d="M1001.8,735.4 C1005.6,737.6 1020.0,743.1 1024.8,748.8 C1029.6,754.5 1029.6,766.4 1030.5,769.9" stroke="#bcc0d6" stroke-width="1.6"/>
<path d="M1011.4,737.3 C1012.7,735.4 1013.9,724.9 1019.0,725.8 C1024.2,726.8 1040.1,735.7 1042.0,743.1 C1043.9,750.4 1034.4,766.4 1030.5,769.9 C1026.7,773.4 1021.3,767.3 1019.0,764.1 C1016.8,760.9 1017.5,753.0 1017.1,750.7" stroke="#bcc0d6" stroke-width="1.6"/>
<path d="M1015.2,725.8 L1038.2,722.0" stroke="#bcc0d6" stroke-width="1.6"/>
<path d="M1021.0,741.1 L1038.2,748.8" stroke="#bcc0d6" stroke-width="1.6"/>
<path d="M1022.9,733.5 L1034.4,727.7" stroke="#bcc0d6" stroke-width="1.6"/>
<path d="M1049.7,722.0 C1049.8,723.9 1047.4,731.6 1050.6,733.5 C1053.8,735.4 1065.8,733.5 1068.8,733.5" stroke="#bcc0d6" stroke-width="1.6"/>
<path d="M1053.5,725.8 L1066.9,725.8" stroke="#bcc0d6" stroke-width="1.6"/>
<path d="M1068.8,722.0 C1069.0,725.2 1068.8,737.6 1069.8,741.1 C1070.7,744.7 1073.8,742.7 1074.6,743.1" stroke="#bcc0d6" stroke-width="1.6"/>
<path d="M1032.4,783.3 L1034.4,810.1" stroke="#bcc0d6" stroke-width="1.6"/>
<path d="M1038.2,812.0 C1038.5,814.2 1036.9,822.7 1040.1,825.4 C1043.3,828.1 1054.5,827.8 1057.3,828.3" stroke="#bcc0d6" stroke-width="1.6"/>
<path d="M1076.5,812.0 L1091.8,813.9" stroke="#bcc0d6" stroke-width="1.6"/>
<path d="M1091.8,785.2 L1091.8,842.0" stroke="#bcc0d6" stroke-width="1.6"/>
<path d="M1074.6,777.5 C1077.4,778.8 1083.7,783.3 1091.8,785.2 C1099.9,787.1 1117.8,788.4 1123.0,789.0" stroke="#bcc0d6" stroke-width="1.6"/>
<path d="M1099.5,771.8 C1100.7,771.1 1103.2,768.6 1107.1,768.0 C1111.0,767.3 1120.4,768.0 1123.0,768.0" stroke="#bcc0d6" stroke-width="1.6"/>
<path d="M1101.4,771.8 L1103.3,783.3" stroke="#bcc0d6" stroke-width="1.6"/>
<path d="M1107.1,785.2 L1123.0,798.6" stroke="#bcc0d6" stroke-width="1.6"/>
<path d="M1114.8,789.0 L1123.0,779.4" stroke="#bcc0d6" stroke-width="1.6"/>
<path d="M1091.8,833.0 L1123.0,836.9" stroke="#bcc0d6" stroke-width="1.6"/>
<path d="M1047.8,781.4 L1066.9,783.3" stroke="#bcc0d6" stroke-width="1.6"/>
<path d="M908.0,768.0 L919.5,760.3" stroke="#bcc0d6" stroke-width="1.6"/>
<path d="M1021.0,754.5 L1018.1,763.2" stroke="#bcc0d6" stroke-width="1"/>
<path d="M1024.2,755.3 L1021.3,764.1" stroke="#bcc0d6" stroke-width="1"/>
<path d="M1027.5,756.1 L1024.6,765.1" stroke="#bcc0d6" stroke-width="1"/>
<path d="M1030.7,756.8 L1027.9,766.0" stroke="#bcc0d6" stroke-width="1"/>
<path d="M1034.0,757.6 L1031.1,767.0" stroke="#bcc0d6" stroke-width="1"/>
<path d="M1037.2,758.4 L1034.4,768.0" stroke="#bcc0d6" stroke-width="1"/>
<path d="M508.0,457.1 C516.9,455.8 544.8,451.6 561.4,449.1 C578.1,446.6 600.0,443.2 607.7,442.0" stroke="#b4b8d0" stroke-width="4"/>
<path d="M661.2,442.0 C664.1,443.2 671.2,446.5 679.0,449.1 C686.8,451.8 703.2,456.5 708.0,458.0" stroke="#b4b8d0" stroke-width="3.6"/>
<path d="M708.0,457.1 C716.9,458.2 746.6,462.2 761.4,463.4 C776.3,464.6 785.2,465.0 797.0,464.3 C808.9,463.5 820.8,460.8 832.7,458.9 C844.5,457.0 855.7,454.3 868.3,452.7 C880.8,451.1 901.4,449.7 908.0,449.1" stroke="#b4b8d0" stroke-width="4"/>
<path d="M908.0,447.7 C919.2,447.4 961.6,444.9 975.0,445.8 C988.4,446.8 979.8,451.3 988.4,453.5 C997.0,455.7 1014.6,457.6 1026.7,459.2 C1038.8,460.8 1050.6,461.1 1061.2,463.1 C1071.7,465.0 1079.6,467.2 1089.9,470.7 C1100.2,474.2 1117.5,481.9 1123.0,484.1" stroke="#b4b8d0" stroke-width="4"/>
<path d="M1123.0,472.6 C1119.1,476.5 1107.2,488.6 1099.5,495.6 C1091.7,502.6 1082.2,510.0 1076.5,514.8 C1070.7,519.5 1066.9,522.7 1065.0,524.3" stroke="#b4b8d0" stroke-width="3.6"/>
<path d="M1059.3,459.2 C1059.6,464.3 1059.3,480.6 1061.2,489.9 C1063.1,499.1 1067.6,507.4 1070.7,514.8 C1073.9,522.1 1078.7,530.7 1080.3,533.9" stroke="#b4b8d0" stroke-width="3.2"/>
<path d="M1040.1,442.0 C1042.3,443.9 1050.0,450.0 1053.5,453.5 C1057.0,457.0 1059.9,461.5 1061.2,463.1" stroke="#b4b8d0" stroke-width="3"/>
<path d="M1107.1,442.0 L1123.0,465.0" stroke="#b4b8d0" stroke-width="3"/>
<path d="M1123.0,497.5 C1121.0,498.8 1116.1,501.0 1110.9,505.2 C1105.7,509.3 1096.0,517.0 1091.8,522.4 C1087.7,527.8 1087.0,535.2 1086.1,537.7" stroke="#b4b8d0" stroke-width="3"/>
<path d="M1099.5,486.0 C1101.4,487.6 1107.0,492.4 1110.9,495.6 C1114.9,498.8 1121.0,503.6 1123.0,505.2" stroke="#b4b8d0" stroke-width="3"/>
<path d="M1113.8,517.6 L1123.0,532.0" stroke="#b4b8d0" stroke-width="3"/>
<path d="M1088.0,442.0 C1089.6,443.9 1093.7,450.0 1097.5,453.5 C1101.4,457.0 1106.7,460.8 1110.9,463.1 C1115.2,465.3 1121.0,466.3 1123.0,466.9" stroke="#b4b8d0" stroke-width="2.6"/>
<path d="M1101.4,499.4 C1102.3,502.0 1103.5,510.9 1107.1,514.8 C1110.7,518.6 1120.4,521.1 1123.0,522.4" stroke="#b4b8d0" stroke-width="2.4"/>
<path d="M1076.5,514.8 C1079.0,513.2 1086.7,509.3 1091.8,505.2 C1096.9,501.0 1103.0,495.0 1107.1,489.9 C1111.3,484.8 1115.1,477.1 1116.7,474.5" stroke="#b4b8d0" stroke-width="2.4"/>
<path d="M905.7,695.4 C901.2,701.4 884.6,720.7 879.0,731.0 C873.3,741.4 874.5,747.6 871.8,757.8 C869.2,767.9 864.4,786.3 862.9,792.0" stroke="#b4b8d0" stroke-width="4.2"/>
<path d="M906.0,653.0 C905.7,658.6 904.0,679.5 903.9,686.5 C903.8,693.6 905.4,693.9 905.7,695.4" stroke="#b4b8d0" stroke-width="3"/>
<path d="M1049.7,634.1 C1052.6,630.3 1063.1,618.2 1066.9,611.1 C1070.7,604.1 1071.7,595.2 1072.7,592.0" stroke="#b4b8d0" stroke-width="3.6"/>
<path d="M1050.6,649.4 C1057.2,649.4 1081.4,648.5 1089.9,649.4 C1098.3,650.4 1095.9,654.2 1101.4,655.2 C1106.9,656.1 1119.4,655.2 1123.0,655.2" stroke="#b4b8d0" stroke-width="3.2"/>
<path d="M1022.9,668.6 C1026.7,672.4 1037.9,683.6 1045.9,691.6 C1053.8,699.5 1065.3,708.1 1070.7,716.4 C1076.2,724.8 1077.1,737.7 1078.4,741.9" stroke="#b4b8d0" stroke-width="3.4"/>
<path d="M908.0,683.9 C911.5,681.3 922.7,673.7 929.1,668.6 C935.4,663.5 943.4,655.8 946.3,653.3" stroke="#b4b8d0" stroke-width="3"/>
<path d="M508.0,777.2 C511.0,778.7 521.2,783.1 525.8,786.1 C530.4,789.1 533.8,785.7 535.6,795.0 C537.4,804.3 536.3,834.2 536.5,842.0" stroke="#b4b8d0" stroke-width="2.0"/>
<path d="M535.6,795.0 C536.3,793.9 534.9,789.2 540.1,788.3 C545.3,787.3 555.5,787.7 566.8,789.1 C578.1,790.6 598.2,800.6 607.7,796.8 C617.2,793.0 621.1,771.6 623.8,766.5" stroke="#b4b8d0" stroke-width="2.0"/>
<path d="M607.7,796.8 C606.0,802.1 599.1,821.3 597.0,828.9 C595.0,836.4 595.6,839.8 595.3,842.0" stroke="#b4b8d0" stroke-width="2.0"/>
<path d="M535.6,842.0 C545.8,839.8 579.7,832.5 597.0,828.9 C614.4,825.2 628.5,824.4 639.8,820.0 C651.1,815.5 653.4,812.2 664.7,802.1 C676.1,792.1 700.8,766.5 708.0,759.4" stroke="#b4b8d0" stroke-width="2.0"/>
<path d="M871.0,762.0 C869.9,766.5 867.8,780.4 864.7,788.7 C861.6,797.0 857.6,803.0 852.3,811.9 C846.9,820.7 835.9,836.9 832.7,842.0" stroke="#b4b8d0" stroke-width="4"/>
<path d="M1074.6,722.0 C1075.0,725.2 1078.1,732.8 1077.4,741.1 C1076.8,749.4 1073.5,760.6 1070.7,771.8 C1068.0,782.9 1063.1,796.4 1061.2,808.2 C1059.3,819.9 1059.6,836.4 1059.3,842.0" stroke="#b4b8d0" stroke-width="4.6"/>
<path d="M1007.6,722.0 C1003.7,729.3 991.0,751.7 984.6,766.0 C978.2,780.4 973.7,795.5 969.3,808.2 C964.8,820.8 959.7,836.4 957.8,842.0" stroke="#b4b8d0" stroke-width="3"/>
<path d="M969.3,810.1 C987.1,810.4 1058.6,806.7 1076.5,812.0 C1094.4,817.3 1076.5,837.0 1076.5,842.0" stroke="#b4b8d0" stroke-width="2.6"/>
<path d="M934.8,794.8 L969.3,810.1" stroke="#b4b8d0" stroke-width="2.6"/>
<path d="M651.5,442.0 C651.0,445.0 649.3,452.4 648.5,459.8 C647.7,467.2 646.5,477.6 646.7,486.5 C647.0,495.4 648.8,506.4 650.1,513.2 C651.5,520.1 652.6,520.4 654.7,527.5 C656.9,534.6 659.8,545.2 662.9,556.0 C666.1,566.7 671.8,586.0 673.6,592.0" stroke="#a9adc8" stroke-width="5.6"/>
<path d="M651.5,442.0 C651.0,445.0 649.3,452.4 648.5,459.8 C647.7,467.2 646.5,477.6 646.7,486.5 C647.0,495.4 648.8,506.4 650.1,513.2 C651.5,520.1 652.6,520.4 654.7,527.5 C656.9,534.6 659.8,545.2 662.9,556.0 C666.1,566.7 671.8,586.0 673.6,592.0" stroke="#c2c5dc" stroke-width="3.3999999999999995"/>
<path d="M671.8,592.0 C674.2,597.9 681.9,615.7 686.1,627.6 C690.2,639.5 693.8,653.1 696.8,663.2 C699.7,673.3 702.0,681.0 703.9,688.2 C705.8,695.3 707.3,703.0 708.0,706.0" stroke="#a9adc8" stroke-width="5.6"/>
<path d="M671.8,592.0 C674.2,597.9 681.9,615.7 686.1,627.6 C690.2,639.5 693.8,653.1 696.8,663.2 C699.7,673.3 702.0,681.0 703.9,688.2 C705.8,695.3 707.3,703.0 708.0,706.0" stroke="#c2c5dc" stroke-width="3.3999999999999995"/>
<path d="M708.0,709.7 C709.2,715.0 712.2,732.8 715.1,741.7 C718.1,750.6 721.1,756.3 725.8,763.1 C730.6,769.9 737.7,777.9 743.6,782.7 C749.6,787.5 758.5,790.4 761.4,792.0" stroke="#a9adc8" stroke-width="5.6"/>
<path d="M708.0,709.7 C709.2,715.0 712.2,732.8 715.1,741.7 C718.1,750.6 721.1,756.3 725.8,763.1 C730.6,769.9 737.7,777.9 743.6,782.7 C749.6,787.5 758.5,790.4 761.4,792.0" stroke="#c2c5dc" stroke-width="3.3999999999999995"/>
<path d="M727.6,762.0 C730.3,765.0 737.1,773.9 743.6,779.8 C750.1,785.7 757.3,792.6 766.8,797.6 C776.3,802.7 789.0,806.8 800.6,810.1 C812.2,813.4 822.0,814.8 836.2,817.2 C850.5,819.6 874.1,822.6 886.1,824.3 C898.1,826.1 904.3,827.3 908.0,827.9" stroke="#a9adc8" stroke-width="5.6"/>
<path d="M727.6,762.0 C730.3,765.0 737.1,773.9 743.6,779.8 C750.1,785.7 757.3,792.6 766.8,797.6 C776.3,802.7 789.0,806.8 800.6,810.1 C812.2,813.4 822.0,814.8 836.2,817.2 C850.5,819.6 874.1,822.6 886.1,824.3 C898.1,826.1 904.3,827.3 908.0,827.9" stroke="#c2c5dc" stroke-width="3.3999999999999995"/>
<path d="M908.0,827.3 C917.6,829.3 952.0,836.3 965.4,839.2 C978.8,842.0 984.6,843.6 988.4,844.5" stroke="#a9adc8" stroke-width="5.6"/>
<path d="M908.0,827.3 C917.6,829.3 952.0,836.3 965.4,839.2 C978.8,842.0 984.6,843.6 988.4,844.5" stroke="#c2c5dc" stroke-width="3.3999999999999995"/>
<path d="M1024.8,442.0 C1026.1,445.5 1029.6,455.9 1032.4,463.1 C1035.3,470.2 1039.0,478.1 1042.0,485.1 C1045.1,492.1 1048.7,499.0 1050.6,505.2 C1052.6,511.4 1051.8,517.6 1053.5,522.4 C1055.3,527.2 1056.7,531.0 1061.2,533.9 C1065.6,536.8 1073.9,537.7 1080.3,539.6 C1086.7,541.6 1092.3,543.2 1099.5,545.4 C1106.6,547.6 1119.1,551.8 1123.0,553.0" stroke="#adadb6" stroke-width="5.2" stroke-linecap="butt"/>
<path d="M1024.8,442.0 C1026.1,445.5 1029.6,455.9 1032.4,463.1 C1035.3,470.2 1039.0,478.1 1042.0,485.1 C1045.1,492.1 1048.7,499.0 1050.6,505.2 C1052.6,511.4 1051.8,517.6 1053.5,522.4 C1055.3,527.2 1056.7,531.0 1061.2,533.9 C1065.6,536.8 1073.9,537.7 1080.3,539.6 C1086.7,541.6 1092.3,543.2 1099.5,545.4 C1106.6,547.6 1119.1,551.8 1123.0,553.0" stroke="#f8f8f8" stroke-width="3.5" stroke-linecap="butt"/>
<path d="M1024.8,442.0 C1026.1,445.5 1029.6,455.9 1032.4,463.1 C1035.3,470.2 1039.0,478.1 1042.0,485.1 C1045.1,492.1 1048.7,499.0 1050.6,505.2 C1052.6,511.4 1051.8,517.6 1053.5,522.4 C1055.3,527.2 1056.7,531.0 1061.2,533.9 C1065.6,536.8 1073.9,537.7 1080.3,539.6 C1086.7,541.6 1092.3,543.2 1099.5,545.4 C1106.6,547.6 1119.1,551.8 1123.0,553.0" stroke="#cfcfd5" stroke-width="3.5" stroke-dasharray="0.8 5.5" stroke-linecap="butt"/>
<path d="M1051.6,564.5 C1052.2,562.0 1053.5,553.0 1055.4,549.2 C1057.3,545.4 1059.9,543.2 1063.1,541.6 C1066.3,540.0 1072.7,540.0 1074.6,539.6" stroke="#adadb6" stroke-width="4.4" stroke-linecap="butt"/>
<path d="M1051.6,564.5 C1052.2,562.0 1053.5,553.0 1055.4,549.2 C1057.3,545.4 1059.9,543.2 1063.1,541.6 C1066.3,540.0 1072.7,540.0 1074.6,539.6" stroke="#f8f8f8" stroke-width="2.7" stroke-linecap="butt"/>
<path d="M1051.6,564.5 C1052.2,562.0 1053.5,553.0 1055.4,549.2 C1057.3,545.4 1059.9,543.2 1063.1,541.6 C1066.3,540.0 1072.7,540.0 1074.6,539.6" stroke="#cfcfd5" stroke-width="2.7" stroke-dasharray="0.8 5.5" stroke-linecap="butt"/>
<path d="M1055.4,591.9 C1059.6,589.3 1071.4,580.6 1080.3,576.0 C1089.2,571.5 1101.9,567.1 1109.0,564.5 C1116.1,562.0 1120.7,561.3 1123.0,560.7" stroke="#adadb6" stroke-width="5.2" stroke-linecap="butt"/>
<path d="M1055.4,591.9 C1059.6,589.3 1071.4,580.6 1080.3,576.0 C1089.2,571.5 1101.9,567.1 1109.0,564.5 C1116.1,562.0 1120.7,561.3 1123.0,560.7" stroke="#f8f8f8" stroke-width="3.5" stroke-linecap="butt"/>
<path d="M1055.4,591.9 C1059.6,589.3 1071.4,580.6 1080.3,576.0 C1089.2,571.5 1101.9,567.1 1109.0,564.5 C1116.1,562.0 1120.7,561.3 1123.0,560.7" stroke="#cfcfd5" stroke-width="3.5" stroke-dasharray="0.8 5.5" stroke-linecap="butt"/>
<path d="M508.0,615.2 C510.4,619.0 517.2,631.2 522.2,638.3 C527.3,645.4 532.9,651.4 538.3,657.9 C543.6,664.4 549.6,671.5 554.3,677.5 C559.1,683.4 562.0,687.6 566.8,693.5 C571.5,699.5 577.2,706.6 582.8,713.1 C588.4,719.6 596.5,727.9 600.6,732.7 C604.8,737.5 606.5,740.4 607.7,742.0" stroke="#adadb6" stroke-width="5.6" stroke-linecap="butt"/>
<path d="M508.0,615.2 C510.4,619.0 517.2,631.2 522.2,638.3 C527.3,645.4 532.9,651.4 538.3,657.9 C543.6,664.4 549.6,671.5 554.3,677.5 C559.1,683.4 562.0,687.6 566.8,693.5 C571.5,699.5 577.2,706.6 582.8,713.1 C588.4,719.6 596.5,727.9 600.6,732.7 C604.8,737.5 606.5,740.4 607.7,742.0" stroke="#f8f8f8" stroke-width="3.9" stroke-linecap="butt"/>
<path d="M508.0,615.2 C510.4,619.0 517.2,631.2 522.2,638.3 C527.3,645.4 532.9,651.4 538.3,657.9 C543.6,664.4 549.6,671.5 554.3,677.5 C559.1,683.4 562.0,687.6 566.8,693.5 C571.5,699.5 577.2,706.6 582.8,713.1 C588.4,719.6 596.5,727.9 600.6,732.7 C604.8,737.5 606.5,740.4 607.7,742.0" stroke="#cfcfd5" stroke-width="3.9" stroke-dasharray="0.8 5.5" stroke-linecap="butt"/>
<path d="M538.3,657.9 C540.9,657.6 549.3,657.5 554.3,656.1 C559.4,654.7 559.1,650.7 568.6,649.3 C578.1,648.0 602.5,649.7 611.3,648.3 C620.1,646.9 618.5,644.7 621.1,641.0 C623.7,637.2 625.9,630.4 627.0,625.8 C628.0,621.2 627.3,615.4 627.3,613.4" stroke="#adadb6" stroke-width="4.9" stroke-linecap="butt"/>
<path d="M538.3,657.9 C540.9,657.6 549.3,657.5 554.3,656.1 C559.4,654.7 559.1,650.7 568.6,649.3 C578.1,648.0 602.5,649.7 611.3,648.3 C620.1,646.9 618.5,644.7 621.1,641.0 C623.7,637.2 625.9,630.4 627.0,625.8 C628.0,621.2 627.3,615.4 627.3,613.4" stroke="#f8f8f8" stroke-width="3.2" stroke-linecap="butt"/>
<path d="M538.3,657.9 C540.9,657.6 549.3,657.5 554.3,656.1 C559.4,654.7 559.1,650.7 568.6,649.3 C578.1,648.0 602.5,649.7 611.3,648.3 C620.1,646.9 618.5,644.7 621.1,641.0 C623.7,637.2 625.9,630.4 627.0,625.8 C628.0,621.2 627.3,615.4 627.3,613.4" stroke="#cfcfd5" stroke-width="3.2" stroke-dasharray="0.8 5.5" stroke-linecap="butt"/>
<path d="M553.4,674.3 L570.3,675.2" stroke="#adadb6" stroke-width="4.4" stroke-linecap="butt"/>
<path d="M553.4,674.3 L570.3,675.2" stroke="#f8f8f8" stroke-width="2.7" stroke-linecap="butt"/>
<path d="M553.4,674.3 L570.3,675.2" stroke="#cfcfd5" stroke-width="2.7" stroke-dasharray="0.8 5.5" stroke-linecap="butt"/>
<path d="M561.4,684.6 C564.4,687.0 574.2,695.1 579.2,698.9 C584.3,702.6 585.2,705.4 591.7,706.9 C598.2,708.4 614.0,707.6 618.4,707.8" stroke="#adadb6" stroke-width="4.7" stroke-linecap="butt"/>
<path d="M561.4,684.6 C564.4,687.0 574.2,695.1 579.2,698.9 C584.3,702.6 585.2,705.4 591.7,706.9 C598.2,708.4 614.0,707.6 618.4,707.8" stroke="#f8f8f8" stroke-width="3.0" stroke-linecap="butt"/>
<path d="M561.4,684.6 C564.4,687.0 574.2,695.1 579.2,698.9 C584.3,702.6 585.2,705.4 591.7,706.9 C598.2,708.4 614.0,707.6 618.4,707.8" stroke="#cfcfd5" stroke-width="3.0" stroke-dasharray="0.8 5.5" stroke-linecap="butt"/>
<path d="M575.7,698.9 C579.2,702.4 590.5,713.0 597.0,720.2 C603.6,727.4 611.9,738.3 614.9,742.0" stroke="#adadb6" stroke-width="5.2" stroke-linecap="butt"/>
<path d="M575.7,698.9 C579.2,702.4 590.5,713.0 597.0,720.2 C603.6,727.4 611.9,738.3 614.9,742.0" stroke="#f8f8f8" stroke-width="3.5" stroke-linecap="butt"/>
<path d="M575.7,698.9 C579.2,702.4 590.5,713.0 597.0,720.2 C603.6,727.4 611.9,738.3 614.9,742.0" stroke="#cfcfd5" stroke-width="3.5" stroke-dasharray="0.8 5.5" stroke-linecap="butt"/>
<path d="M584.6,706.0 C588.4,709.5 600.9,721.4 607.7,727.4 C614.6,733.3 622.6,739.5 625.5,742.0" stroke="#adadb6" stroke-width="5.2" stroke-linecap="butt"/>
<path d="M584.6,706.0 C588.4,709.5 600.9,721.4 607.7,727.4 C614.6,733.3 622.6,739.5 625.5,742.0" stroke="#f8f8f8" stroke-width="3.5" stroke-linecap="butt"/>
<path d="M584.6,706.0 C588.4,709.5 600.9,721.4 607.7,727.4 C614.6,733.3 622.6,739.5 625.5,742.0" stroke="#cfcfd5" stroke-width="3.5" stroke-dasharray="0.8 5.5" stroke-linecap="butt"/>
<path d="M565.0,697.1 C566.5,700.3 569.4,710.4 573.9,716.7 C578.3,722.9 587.5,730.3 591.7,734.5 C595.9,738.7 597.6,740.7 598.8,742.0" stroke="#adadb6" stroke-width="4.4" stroke-linecap="butt"/>
<path d="M565.0,697.1 C566.5,700.3 569.4,710.4 573.9,716.7 C578.3,722.9 587.5,730.3 591.7,734.5 C595.9,738.7 597.6,740.7 598.8,742.0" stroke="#f8f8f8" stroke-width="2.7" stroke-linecap="butt"/>
<path d="M565.0,697.1 C566.5,700.3 569.4,710.4 573.9,716.7 C578.3,722.9 587.5,730.3 591.7,734.5 C595.9,738.7 597.6,740.7 598.8,742.0" stroke="#cfcfd5" stroke-width="2.7" stroke-dasharray="0.8 5.5" stroke-linecap="butt"/>
<path d="M1068.8,592.0 C1066.3,595.2 1058.3,604.4 1053.5,611.1 C1048.7,617.8 1044.9,624.9 1040.1,632.2 C1035.3,639.5 1029.6,647.8 1024.8,655.2 C1020.0,662.5 1016.8,667.0 1011.4,676.2 C1006.0,685.5 998.3,699.8 992.2,710.7 C986.2,721.7 977.9,736.7 975.0,741.9" stroke="#adadb6" stroke-width="5.2" stroke-linecap="butt"/>
<path d="M1068.8,592.0 C1066.3,595.2 1058.3,604.4 1053.5,611.1 C1048.7,617.8 1044.9,624.9 1040.1,632.2 C1035.3,639.5 1029.6,647.8 1024.8,655.2 C1020.0,662.5 1016.8,667.0 1011.4,676.2 C1006.0,685.5 998.3,699.8 992.2,710.7 C986.2,721.7 977.9,736.7 975.0,741.9" stroke="#f8f8f8" stroke-width="3.5" stroke-linecap="butt"/>
<path d="M1068.8,592.0 C1066.3,595.2 1058.3,604.4 1053.5,611.1 C1048.7,617.8 1044.9,624.9 1040.1,632.2 C1035.3,639.5 1029.6,647.8 1024.8,655.2 C1020.0,662.5 1016.8,667.0 1011.4,676.2 C1006.0,685.5 998.3,699.8 992.2,710.7 C986.2,721.7 977.9,736.7 975.0,741.9" stroke="#cfcfd5" stroke-width="3.5" stroke-dasharray="0.8 5.5" stroke-linecap="butt"/>
<path d="M1061.2,592.0 C1058.6,595.2 1050.6,604.4 1045.9,611.1 C1041.1,617.8 1037.2,624.9 1032.4,632.2 C1027.7,639.5 1021.9,647.8 1017.1,655.2 C1012.3,662.5 1009.2,667.0 1003.7,676.2 C998.3,685.5 990.6,699.8 984.6,710.7 C978.5,721.7 970.2,736.7 967.4,741.9" stroke="#adadb6" stroke-width="5.2" stroke-linecap="butt"/>
<path d="M1061.2,592.0 C1058.6,595.2 1050.6,604.4 1045.9,611.1 C1041.1,617.8 1037.2,624.9 1032.4,632.2 C1027.7,639.5 1021.9,647.8 1017.1,655.2 C1012.3,662.5 1009.2,667.0 1003.7,676.2 C998.3,685.5 990.6,699.8 984.6,710.7 C978.5,721.7 970.2,736.7 967.4,741.9" stroke="#f8f8f8" stroke-width="3.5" stroke-linecap="butt"/>
<path d="M1061.2,592.0 C1058.6,595.2 1050.6,604.4 1045.9,611.1 C1041.1,617.8 1037.2,624.9 1032.4,632.2 C1027.7,639.5 1021.9,647.8 1017.1,655.2 C1012.3,662.5 1009.2,667.0 1003.7,676.2 C998.3,685.5 990.6,699.8 984.6,710.7 C978.5,721.7 970.2,736.7 967.4,741.9" stroke="#cfcfd5" stroke-width="3.5" stroke-dasharray="0.8 5.5" stroke-linecap="butt"/>
<path d="M949.2,665.7 C951.9,666.2 959.9,669.2 965.4,668.6 C971.0,667.9 979.2,664.4 982.7,661.9 C986.2,659.3 985.9,654.7 986.5,653.3" stroke="#adadb6" stroke-width="5.2" stroke-linecap="butt"/>
<path d="M949.2,665.7 C951.9,666.2 959.9,669.2 965.4,668.6 C971.0,667.9 979.2,664.4 982.7,661.9 C986.2,659.3 985.9,654.7 986.5,653.3" stroke="#f8f8f8" stroke-width="3.5" stroke-linecap="butt"/>
<path d="M949.2,665.7 C951.9,666.2 959.9,669.2 965.4,668.6 C971.0,667.9 979.2,664.4 982.7,661.9 C986.2,659.3 985.9,654.7 986.5,653.3" stroke="#cfcfd5" stroke-width="3.5" stroke-dasharray="0.8 5.5" stroke-linecap="butt"/>
<path d="M949.2,674.3 L965.4,667.6" stroke="#adadb6" stroke-width="3.6" stroke-linecap="butt"/>
<path d="M949.2,674.3 L965.4,667.6" stroke="#f8f8f8" stroke-width="1.9" stroke-linecap="butt"/>
<path d="M949.2,674.3 L965.4,667.6" stroke="#cfcfd5" stroke-width="1.9" stroke-dasharray="0.8 5.5" stroke-linecap="butt"/>
<path d="M949.2,682.9 L971.2,672.4" stroke="#adadb6" stroke-width="3.6" stroke-linecap="butt"/>
<path d="M949.2,682.9 L971.2,672.4" stroke="#f8f8f8" stroke-width="1.9" stroke-linecap="butt"/>
<path d="M949.2,682.9 L971.2,672.4" stroke="#cfcfd5" stroke-width="1.9" stroke-dasharray="0.8 5.5" stroke-linecap="butt"/>
<path d="M587.3,722.0 C591.9,727.0 607.3,745.0 614.9,752.3 C622.4,759.5 627.0,760.6 632.7,765.6 C638.3,770.7 643.6,774.4 648.7,782.6 C653.7,790.7 658.2,804.7 662.9,814.6 C667.7,824.5 674.8,837.5 677.2,842.0" stroke="#adadb6" stroke-width="5.4" stroke-linecap="butt"/>
<path d="M587.3,722.0 C591.9,727.0 607.3,745.0 614.9,752.3 C622.4,759.5 627.0,760.6 632.7,765.6 C638.3,770.7 643.6,774.4 648.7,782.6 C653.7,790.7 658.2,804.7 662.9,814.6 C667.7,824.5 674.8,837.5 677.2,842.0" stroke="#f8f8f8" stroke-width="3.7" stroke-linecap="butt"/>
<path d="M587.3,722.0 C591.9,727.0 607.3,745.0 614.9,752.3 C622.4,759.5 627.0,760.6 632.7,765.6 C638.3,770.7 643.6,774.4 648.7,782.6 C653.7,790.7 658.2,804.7 662.9,814.6 C667.7,824.5 674.8,837.5 677.2,842.0" stroke="#cfcfd5" stroke-width="3.7" stroke-dasharray="0.8 5.5" stroke-linecap="butt"/>
<path d="M598.8,722.0 C603.0,726.5 617.5,741.9 623.8,748.7 C630.0,755.5 634.2,760.6 636.2,763.0" stroke="#adadb6" stroke-width="5.2" stroke-linecap="butt"/>
<path d="M598.8,722.0 C603.0,726.5 617.5,741.9 623.8,748.7 C630.0,755.5 634.2,760.6 636.2,763.0" stroke="#f8f8f8" stroke-width="3.5" stroke-linecap="butt"/>
<path d="M598.8,722.0 C603.0,726.5 617.5,741.9 623.8,748.7 C630.0,755.5 634.2,760.6 636.2,763.0" stroke="#cfcfd5" stroke-width="3.5" stroke-dasharray="0.8 5.5" stroke-linecap="butt"/>
<path d="M607.7,722.0 C611.3,726.5 624.4,742.0 629.1,748.7 C633.9,755.4 632.1,757.6 636.2,762.1 C640.4,766.5 648.4,770.5 654.0,775.4 C659.7,780.3 667.4,788.8 670.1,791.5" stroke="#adadb6" stroke-width="5.2" stroke-linecap="butt"/>
<path d="M607.7,722.0 C611.3,726.5 624.4,742.0 629.1,748.7 C633.9,755.4 632.1,757.6 636.2,762.1 C640.4,766.5 648.4,770.5 654.0,775.4 C659.7,780.3 667.4,788.8 670.1,791.5" stroke="#f8f8f8" stroke-width="3.5" stroke-linecap="butt"/>
<path d="M607.7,722.0 C611.3,726.5 624.4,742.0 629.1,748.7 C633.9,755.4 632.1,757.6 636.2,762.1 C640.4,766.5 648.4,770.5 654.0,775.4 C659.7,780.3 667.4,788.8 670.1,791.5" stroke="#cfcfd5" stroke-width="3.5" stroke-dasharray="0.8 5.5" stroke-linecap="butt"/>
<path d="M908.0,811.0 C906.1,812.3 899.8,815.9 896.8,819.0 C893.7,822.1 891.9,825.8 889.7,829.7 C887.4,833.5 884.5,839.9 883.4,842.0" stroke="#adadb6" stroke-width="5.2" stroke-linecap="butt"/>
<path d="M908.0,811.0 C906.1,812.3 899.8,815.9 896.8,819.0 C893.7,822.1 891.9,825.8 889.7,829.7 C887.4,833.5 884.5,839.9 883.4,842.0" stroke="#f8f8f8" stroke-width="3.5" stroke-linecap="butt"/>
<path d="M908.0,811.0 C906.1,812.3 899.8,815.9 896.8,819.0 C893.7,822.1 891.9,825.8 889.7,829.7 C887.4,833.5 884.5,839.9 883.4,842.0" stroke="#cfcfd5" stroke-width="3.5" stroke-dasharray="0.8 5.5" stroke-linecap="butt"/>
<path d="M988.4,722.0 C985.5,725.2 977.2,734.4 971.2,741.1 C965.1,747.8 957.8,755.2 952.0,762.2 C946.3,769.2 941.5,776.6 936.7,783.3 C931.9,790.0 928.1,797.3 923.3,802.4 C918.5,807.5 910.6,812.0 908.0,813.9" stroke="#adadb6" stroke-width="5.5" stroke-linecap="butt"/>
<path d="M988.4,722.0 C985.5,725.2 977.2,734.4 971.2,741.1 C965.1,747.8 957.8,755.2 952.0,762.2 C946.3,769.2 941.5,776.6 936.7,783.3 C931.9,790.0 928.1,797.3 923.3,802.4 C918.5,807.5 910.6,812.0 908.0,813.9" stroke="#f8f8f8" stroke-width="3.8" stroke-linecap="butt"/>
<path d="M988.4,722.0 C985.5,725.2 977.2,734.4 971.2,741.1 C965.1,747.8 957.8,755.2 952.0,762.2 C946.3,769.2 941.5,776.6 936.7,783.3 C931.9,790.0 928.1,797.3 923.3,802.4 C918.5,807.5 910.6,812.0 908.0,813.9" stroke="#cfcfd5" stroke-width="3.8" stroke-dasharray="0.8 5.5" stroke-linecap="butt"/>
<path d="M1123.0,802.4 C1119.1,803.1 1105.6,804.3 1099.5,806.2 C1093.3,808.2 1088.8,811.5 1086.1,813.9 C1083.3,816.3 1083.7,819.5 1083.2,820.6" stroke="#adadb6" stroke-width="5.2" stroke-linecap="butt"/>
<path d="M1123.0,802.4 C1119.1,803.1 1105.6,804.3 1099.5,806.2 C1093.3,808.2 1088.8,811.5 1086.1,813.9 C1083.3,816.3 1083.7,819.5 1083.2,820.6" stroke="#f8f8f8" stroke-width="3.5" stroke-linecap="butt"/>
<path d="M1123.0,802.4 C1119.1,803.1 1105.6,804.3 1099.5,806.2 C1093.3,808.2 1088.8,811.5 1086.1,813.9 C1083.3,816.3 1083.7,819.5 1083.2,820.6" stroke="#cfcfd5" stroke-width="3.5" stroke-dasharray="0.8 5.5" stroke-linecap="butt"/>
<path d="M1123.0,812.0 C1119.4,812.3 1106.6,812.6 1101.4,813.9 C1096.2,815.2 1093.4,818.7 1091.8,819.6" stroke="#adadb6" stroke-width="4.4" stroke-linecap="butt"/>
<path d="M1123.0,812.0 C1119.4,812.3 1106.6,812.6 1101.4,813.9 C1096.2,815.2 1093.4,818.7 1091.8,819.6" stroke="#f8f8f8" stroke-width="2.7" stroke-linecap="butt"/>
<path d="M1123.0,812.0 C1119.4,812.3 1106.6,812.6 1101.4,813.9 C1096.2,815.2 1093.4,818.7 1091.8,819.6" stroke="#cfcfd5" stroke-width="2.7" stroke-dasharray="0.8 5.5" stroke-linecap="butt"/>
</g>
<text x="651.0" y="515.0" text-anchor="middle" transform="rotate(75 651.0 511.5)" font-family="Liberation Sans, sans-serif" font-size="9.8" font-weight="400" letter-spacing="0" style="paint-order:stroke" stroke="#f4f5f4" stroke-width="2.2" stroke-linejoin="round" fill="#303030">МКАД</text>
<text x="642.8" y="553.7" text-anchor="middle" transform="rotate(-11 642.8 550.1)" font-family="Liberation Sans, sans-serif" font-size="10.2" font-weight="400" letter-spacing="0" style="paint-order:stroke" stroke="#f4f5f4" stroke-width="2.2" stroke-linejoin="round" fill="#303030">H8984</text>
<text x="671.0" y="499.0" text-anchor="start" transform="rotate(0 671.0 499.0)" font-family="Liberation Sans, sans-serif" font-size="11" font-weight="400" letter-spacing="0" style="font-style:italic;paint-order:stroke" stroke="#f4f5f4" stroke-width="2" stroke-linejoin="round" fill="#8a8a8a">Красный Бор</text>
<text x="735.0" y="446.0" text-anchor="start" transform="rotate(0 735.0 446.0)" font-family="Liberation Sans, sans-serif" font-size="11" font-weight="400" letter-spacing="0" style="font-style:italic;paint-order:stroke" stroke="#f4f5f4" stroke-width="2" stroke-linejoin="round" fill="#8a8a8a" textLength="61" lengthAdjust="spacingAndGlyphs">Кунцевщина</text>
<text x="884.8" y="452.0" text-anchor="start" transform="rotate(90 884.8 452.0)" font-family="Liberation Sans, sans-serif" font-size="10" font-weight="400" letter-spacing="0" style="paint-order:stroke" stroke="#f4f5f4" stroke-width="2.2" stroke-linejoin="round" fill="#303030">улица Притыцкого</text>
<text x="933.5" y="436.0" text-anchor="start" transform="rotate(90 933.5 436.0)" font-family="Liberation Sans, sans-serif" font-size="10" font-weight="400" letter-spacing="0" style="paint-order:stroke" stroke="#f4f5f4" stroke-width="2.2" stroke-linejoin="round" fill="#303030">Пушкина</text>
<text x="532.0" y="529.6" text-anchor="start" transform="rotate(-90 532.0 529.6)" font-family="Liberation Sans, sans-serif" font-size="9.3" font-weight="400" letter-spacing="0" style="paint-order:stroke" stroke="#f4f5f4" stroke-width="2.2" stroke-linejoin="round" fill="#303030">H8980</text>
<text x="706.6" y="707.6" text-anchor="middle" transform="rotate(75 706.6 704.1)" font-family="Liberation Sans, sans-serif" font-size="9.8" font-weight="400" letter-spacing="0" style="paint-order:stroke" stroke="#f4f5f4" stroke-width="2.2" stroke-linejoin="round" fill="#303030">МКАД</text>
<text x="718.3" y="730.4" text-anchor="middle" transform="rotate(62.1 718.3 730.4)" font-family="Liberation Sans, sans-serif" font-size="10.6" font-weight="400" letter-spacing="0" style="paint-order:stroke" stroke="#f4f5f4" stroke-width="2.2" stroke-linejoin="round" fill="#303030">С</text><text x="721.6" y="736.4" text-anchor="middle" transform="rotate(59.7 721.6 736.4)" font-family="Liberation Sans, sans-serif" font-size="10.6" font-weight="400" letter-spacing="0" style="paint-order:stroke" stroke="#f4f5f4" stroke-width="2.2" stroke-linejoin="round" fill="#303030">л</text><text x="724.8" y="741.6" text-anchor="middle" transform="rotate(57.6 724.8 741.6)" font-family="Liberation Sans, sans-serif" font-size="10.6" font-weight="400" letter-spacing="0" style="paint-order:stroke" stroke="#f4f5f4" stroke-width="2.2" stroke-linejoin="round" fill="#303030">о</text><text x="728.1" y="746.6" text-anchor="middle" transform="rotate(55.6 728.1 746.6)" font-family="Liberation Sans, sans-serif" font-size="10.6" font-weight="400" letter-spacing="0" style="paint-order:stroke" stroke="#f4f5f4" stroke-width="2.2" stroke-linejoin="round" fill="#303030">б</text><text x="731.5" y="751.5" text-anchor="middle" transform="rotate(53.7 731.5 751.5)" font-family="Liberation Sans, sans-serif" font-size="10.6" font-weight="400" letter-spacing="0" style="paint-order:stroke" stroke="#f4f5f4" stroke-width="2.2" stroke-linejoin="round" fill="#303030">о</text><text x="735.2" y="756.3" text-anchor="middle" transform="rotate(51.8 735.2 756.3)" font-family="Liberation Sans, sans-serif" font-size="10.6" font-weight="400" letter-spacing="0" style="paint-order:stroke" stroke="#f4f5f4" stroke-width="2.2" stroke-linejoin="round" fill="#303030">д</text><text x="738.8" y="760.7" text-anchor="middle" transform="rotate(50.1 738.8 760.7)" font-family="Liberation Sans, sans-serif" font-size="10.6" font-weight="400" letter-spacing="0" style="paint-order:stroke" stroke="#f4f5f4" stroke-width="2.2" stroke-linejoin="round" fill="#303030">с</text><text x="742.0" y="764.5" text-anchor="middle" transform="rotate(48.6 742.0 764.5)" font-family="Liberation Sans, sans-serif" font-size="10.6" font-weight="400" letter-spacing="0" style="paint-order:stroke" stroke="#f4f5f4" stroke-width="2.2" stroke-linejoin="round" fill="#303030">к</text><text x="745.6" y="768.4" text-anchor="middle" transform="rotate(47.1 745.6 768.4)" font-family="Liberation Sans, sans-serif" font-size="10.6" font-weight="400" letter-spacing="0" style="paint-order:stroke" stroke="#f4f5f4" stroke-width="2.2" stroke-linejoin="round" fill="#303030">а</text><text x="749.6" y="772.6" text-anchor="middle" transform="rotate(45.4 749.6 772.6)" font-family="Liberation Sans, sans-serif" font-size="10.6" font-weight="400" letter-spacing="0" style="paint-order:stroke" stroke="#f4f5f4" stroke-width="2.2" stroke-linejoin="round" fill="#303030">я</text><text x="755.6" y="778.5" text-anchor="middle" transform="rotate(43.2 755.6 778.5)" font-family="Liberation Sans, sans-serif" font-size="10.6" font-weight="400" letter-spacing="0" style="paint-order:stroke" stroke="#f4f5f4" stroke-width="2.2" stroke-linejoin="round" fill="#303030">у</text><text x="759.9" y="782.4" text-anchor="middle" transform="rotate(41.7 759.9 782.4)" font-family="Liberation Sans, sans-serif" font-size="10.6" font-weight="400" letter-spacing="0" style="paint-order:stroke" stroke="#f4f5f4" stroke-width="2.2" stroke-linejoin="round" fill="#303030">л</text><text x="764.4" y="786.4" text-anchor="middle" transform="rotate(40.3 764.4 786.4)" font-family="Liberation Sans, sans-serif" font-size="10.6" font-weight="400" letter-spacing="0" style="paint-order:stroke" stroke="#f4f5f4" stroke-width="2.2" stroke-linejoin="round" fill="#303030">и</text><text x="769.1" y="790.2" text-anchor="middle" transform="rotate(38.9 769.1 790.2)" font-family="Liberation Sans, sans-serif" font-size="10.6" font-weight="400" letter-spacing="0" style="paint-order:stroke" stroke="#f4f5f4" stroke-width="2.2" stroke-linejoin="round" fill="#303030">ц</text><text x="773.8" y="793.9" text-anchor="middle" transform="rotate(37.6 773.8 793.9)" font-family="Liberation Sans, sans-serif" font-size="10.6" font-weight="400" letter-spacing="0" style="paint-order:stroke" stroke="#f4f5f4" stroke-width="2.2" stroke-linejoin="round" fill="#303030">а</text>
<text x="746.8" y="728.0" text-anchor="middle" transform="rotate(-47.2 746.8 728.0)" font-family="Liberation Sans, sans-serif" font-size="10.6" font-weight="400" letter-spacing="0" style="paint-order:stroke" stroke="#f4f5f4" stroke-width="2.2" stroke-linejoin="round" fill="#303030">у</text><text x="750.8" y="723.9" text-anchor="middle" transform="rotate(-44.4 750.8 723.9)" font-family="Liberation Sans, sans-serif" font-size="10.6" font-weight="400" letter-spacing="0" style="paint-order:stroke" stroke="#f4f5f4" stroke-width="2.2" stroke-linejoin="round" fill="#303030">л</text><text x="755.2" y="719.8" text-anchor="middle" transform="rotate(-41.6 755.2 719.8)" font-family="Liberation Sans, sans-serif" font-size="10.6" font-weight="400" letter-spacing="0" style="paint-order:stroke" stroke="#f4f5f4" stroke-width="2.2" stroke-linejoin="round" fill="#303030">и</text><text x="759.8" y="715.9" text-anchor="middle" transform="rotate(-38.8 759.8 715.9)" font-family="Liberation Sans, sans-serif" font-size="10.6" font-weight="400" letter-spacing="0" style="paint-order:stroke" stroke="#f4f5f4" stroke-width="2.2" stroke-linejoin="round" fill="#303030">ц</text><text x="764.5" y="712.3" text-anchor="middle" transform="rotate(-36.2 764.5 712.3)" font-family="Liberation Sans, sans-serif" font-size="10.6" font-weight="400" letter-spacing="0" style="paint-order:stroke" stroke="#f4f5f4" stroke-width="2.2" stroke-linejoin="round" fill="#303030">а</text><text x="772.3" y="707.0" text-anchor="middle" transform="rotate(-32.4 772.3 707.0)" font-family="Liberation Sans, sans-serif" font-size="10.6" font-weight="400" letter-spacing="0" style="paint-order:stroke" stroke="#f4f5f4" stroke-width="2.2" stroke-linejoin="round" fill="#303030">Р</text><text x="777.9" y="703.6" text-anchor="middle" transform="rotate(-29.9 777.9 703.6)" font-family="Liberation Sans, sans-serif" font-size="10.6" font-weight="400" letter-spacing="0" style="paint-order:stroke" stroke="#f4f5f4" stroke-width="2.2" stroke-linejoin="round" fill="#303030">а</text><text x="784.3" y="700.1" text-anchor="middle" transform="rotate(-27.3 784.3 700.1)" font-family="Liberation Sans, sans-serif" font-size="10.6" font-weight="400" letter-spacing="0" style="paint-order:stroke" stroke="#f4f5f4" stroke-width="2.2" stroke-linejoin="round" fill="#303030">ф</text><text x="790.9" y="696.9" text-anchor="middle" transform="rotate(-24.7 790.9 696.9)" font-family="Liberation Sans, sans-serif" font-size="10.6" font-weight="400" letter-spacing="0" style="paint-order:stroke" stroke="#f4f5f4" stroke-width="2.2" stroke-linejoin="round" fill="#303030">и</text><text x="796.3" y="694.5" text-anchor="middle" transform="rotate(-22.9 796.3 694.5)" font-family="Liberation Sans, sans-serif" font-size="10.6" font-weight="400" letter-spacing="0" style="paint-order:stroke" stroke="#f4f5f4" stroke-width="2.2" stroke-linejoin="round" fill="#303030">е</text><text x="801.6" y="692.4" text-anchor="middle" transform="rotate(-21.2 801.6 692.4)" font-family="Liberation Sans, sans-serif" font-size="10.6" font-weight="400" letter-spacing="0" style="paint-order:stroke" stroke="#f4f5f4" stroke-width="2.2" stroke-linejoin="round" fill="#303030">в</text><text x="807.0" y="690.3" text-anchor="middle" transform="rotate(-19.5 807.0 690.3)" font-family="Liberation Sans, sans-serif" font-size="10.6" font-weight="400" letter-spacing="0" style="paint-order:stroke" stroke="#f4f5f4" stroke-width="2.2" stroke-linejoin="round" fill="#303030">а</text>
<text x="771.2" y="761.5" text-anchor="start" transform="rotate(0 771.2 761.5)" font-family="Liberation Sans, sans-serif" font-size="11" font-weight="400" letter-spacing="0" style="font-style:italic;paint-order:stroke" stroke="#f4f5f4" stroke-width="2" stroke-linejoin="round" fill="#8a8a8a" textLength="51.7" lengthAdjust="spacingAndGlyphs">Малиновка</text>
<text x="826.4" y="698.6" text-anchor="start" transform="rotate(0 826.4 698.6)" font-family="Liberation Sans, sans-serif" font-size="11" font-weight="400" letter-spacing="0" style="font-style:italic;paint-order:stroke" stroke="#f4f5f4" stroke-width="2" stroke-linejoin="round" fill="#8a8a8a" textLength="50" lengthAdjust="spacingAndGlyphs">Юго-Запад</text>
<text x="901.0" y="695.4" text-anchor="start" transform="rotate(0 901.0 695.4)" font-family="Liberation Sans, sans-serif" font-size="11" font-weight="400" letter-spacing="0" style="font-style:italic;paint-order:stroke" stroke="#f4f5f4" stroke-width="2" stroke-linejoin="round" fill="#8a8a8a" textLength="59.6" lengthAdjust="spacingAndGlyphs">Петровщина</text>
<text x="850.5" y="822.8" text-anchor="middle" transform="rotate(10 850.5 819.3)" font-family="Liberation Sans, sans-serif" font-size="9.8" font-weight="400" letter-spacing="0" style="paint-order:stroke" stroke="#f4f5f4" stroke-width="2.2" stroke-linejoin="round" fill="#303030">МКАД</text>
<text x="862.6" y="808.7" text-anchor="start" transform="rotate(0 862.6 808.7)" font-family="Liberation Sans, sans-serif" font-size="11" font-weight="400" letter-spacing="0" style="font-style:italic;paint-order:stroke" stroke="#f4f5f4" stroke-width="2" stroke-linejoin="round" fill="#8a8a8a" textLength="52" lengthAdjust="spacingAndGlyphs">Брилевичи</text>
<text x="981.7" y="779.4" text-anchor="start" transform="rotate(0 981.7 779.4)" font-family="Liberation Sans, sans-serif" font-size="11" font-weight="400" letter-spacing="0" style="font-style:italic;paint-order:stroke" stroke="#f4f5f4" stroke-width="2" stroke-linejoin="round" fill="#8a8a8a" textLength="64.2" lengthAdjust="spacingAndGlyphs">Курасовщина</text>
<text x="1087.0" y="782.9" text-anchor="start" transform="rotate(0 1087.0 782.9)" font-family="Liberation Sans, sans-serif" font-size="11" font-weight="400" letter-spacing="0" style="font-style:italic;paint-order:stroke" stroke="#f4f5f4" stroke-width="2" stroke-linejoin="round" fill="#8a8a8a" textLength="34" lengthAdjust="spacingAndGlyphs">Серова</text>
</svg>
<div class="abs" style="left:11.2px;top:11.4px;width:34px;height:68.4px;background:#fff;border-radius:4px;box-shadow:0 1px 5px rgba(0,0,0,.4)"></div>
<div class="abs" style="left:11.2px;top:45px;width:34px;height:1px;background:#ccc"></div>
<svg class="abs" style="left:11.2px;top:11.4px" width="34" height="69" viewBox="0 0 34 69"><path d="M11.1 17.4 H24.7 M17.9 10.6 V24.2 M11.1 52.1 H24.7" stroke="#111" stroke-width="2.2" fill="none"/></svg>
<div class="abs" style="left:11.2px;top:91.2px;width:40.6px;height:39.4px;background:#fff;border-radius:6px;box-shadow:0 1px 4px rgba(0,0,0,.3)"></div>
<svg class="abs" style="left:21.8px;top:99.8px" width="20.4" height="20.4" viewBox="0 0 22 22"><g fill="none" stroke="#1a1a1a" stroke-width="2"><path d="M1.2 1.2 L9.2 9.2 M1.2 7 V1.2 H7"/><path d="M20.8 1.2 L12.8 9.2 M15 1.2 H20.8 V7"/><path d="M1.2 20.8 L9.2 12.8 M1.2 15 V20.8 H7"/><path d="M20.8 20.8 L12.8 12.8 M20.8 15 V20.8 H15"/></g></svg>
<svg class="abs" style="left:345.1px;top:234.9px" width="34.2" height="24" viewBox="0 0 766 535" preserveAspectRatio="none">
<ellipse cx="400" cy="470" rx="330" ry="55" fill="#000" opacity=".13"/>
<polygon points="380,390 765,255 765,312 560,455 380,482" fill="#222"/>
<polygon points="175,95 490,10 765,25 370,150" fill="#74d05e"/>
<polygon points="365,145 765,28 765,258 380,392" fill="#2dab14"/>
<polygon points="175,95 370,150 370,215 175,180" fill="#3db528"/>
<polygon points="25,175 100,142 355,152 270,192" fill="#e3e8e5"/>
<polygon points="20,185 270,190 270,482 60,472 5,440" fill="#c3cac6"/>
<polygon points="270,190 355,152 360,470 270,482" fill="#969d99"/>
<polygon points="30,192 230,197 225,264 35,247" fill="#1c1c1c"/>
<polygon points="282,202 345,177 345,252 282,267" fill="#2e2e2e"/>
<polygon points="40,355 170,365 170,447 40,427" fill="#3c3c3c"/>
<polygon points="5,432 270,472 270,505 60,492 5,462" fill="#8a928e"/>
<ellipse cx="330" cy="468" rx="38" ry="46" fill="#101010"/><ellipse cx="326" cy="468" rx="14" ry="21" fill="#c4c4c4"/>
<ellipse cx="630" cy="358" rx="30" ry="37" fill="#222"/><ellipse cx="627" cy="358" rx="12" ry="17" fill="#8a8a8a"/>
<ellipse cx="712" cy="328" rx="28" ry="35" fill="#222"/><ellipse cx="709" cy="328" rx="11" ry="16" fill="#8a8a8a"/>
</svg>
</div>
<div class="abs" style="left:703.2px;top:433.8px;width:3px;height:3px;border-radius:50%;background:#222"></div><div class="abs" style="left:707.8px;top:433.8px;width:3px;height:3px;border-radius:50%;background:#222"></div><div class="abs" style="left:712.4px;top:433.8px;width:3px;height:3px;border-radius:50%;background:#222"></div>
<div id="pop" style="left:690px;top:485px;width:360px;height:168px">
<div class="abs" style="left:20.9px;top:16px;width:45px;height:18px;background:#e2b716;border-radius:2px"></div>
<div class="t" style="left:33.1px;top:19.00px;font-size:13.5px;letter-spacing:1.259px;font-weight:700;color:#fff">0/8</div>
<svg class="abs" style="left:74.8px;top:20.7px" width="21" height="14.6" viewBox="0 0 766 535" preserveAspectRatio="none">
<ellipse cx="400" cy="470" rx="330" ry="55" fill="#000" opacity=".13"/>
<polygon points="380,390 765,255 765,312 560,455 380,482" fill="#222"/>
<polygon points="175,95 490,10 765,25 370,150" fill="#74d05e"/>
<polygon points="365,145 765,28 765,258 380,392" fill="#2dab14"/>
<polygon points="175,95 370,150 370,215 175,180" fill="#3db528"/>
<polygon points="25,175 100,142 355,152 270,192" fill="#e3e8e5"/>
<polygon points="20,185 270,190 270,482 60,472 5,440" fill="#c3cac6"/>
<polygon points="270,190 355,152 360,470 270,482" fill="#969d99"/>
<polygon points="30,192 230,197 225,264 35,247" fill="#1c1c1c"/>
<polygon points="282,202 345,177 345,252 282,267" fill="#2e2e2e"/>
<polygon points="40,355 170,365 170,447 40,427" fill="#3c3c3c"/>
<polygon points="5,432 270,472 270,505 60,492 5,462" fill="#8a928e"/>
<ellipse cx="330" cy="468" rx="38" ry="46" fill="#101010"/><ellipse cx="326" cy="468" rx="14" ry="21" fill="#c4c4c4"/>
<ellipse cx="630" cy="358" rx="30" ry="37" fill="#222"/><ellipse cx="627" cy="358" rx="12" ry="17" fill="#8a8a8a"/>
<ellipse cx="712" cy="328" rx="28" ry="35" fill="#222"/><ellipse cx="709" cy="328" rx="11" ry="16" fill="#8a8a8a"/>
</svg>
<div class="t" style="left:103.7px;top:19.00px;font-size:14px;letter-spacing:-0.184px;color:#444">Courier</div>
<div class="abs" style="left:41.5px;top:57.6px;width:2px;height:72.4px;background:#e2b716"></div>
<div class="abs" style="left:29.9px;top:45.0px;width:25.2px;height:25.2px;border:1.4px solid #e3b920;border-radius:50%;background:#fff"></div>
<div class="t" style="left:29.9px;width:25.2px;text-align:center;top:51px;font-size:14px;color:#e1b313">1</div>
<div class="t" style="left:70.2px;top:55.00px;font-size:14.5px;letter-spacing:0.859px;color:#444">42</div>
<div class="t" style="left:198.5px;top:50.00px;font-size:14.5px;letter-spacing:-0.174px;color:#444">13:57</div>
<div class="abs" style="left:29.9px;top:81.1px;width:25.2px;height:25.2px;border:1.4px solid #e3b920;border-radius:50%;background:#fff"></div>
<div class="t" style="left:29.9px;width:25.2px;text-align:center;top:87px;font-size:14px;color:#e1b313">2</div>
<div class="t" style="left:70.2px;top:89.00px;font-size:14.5px;letter-spacing:0.859px;color:#444">43</div>
<div class="t" style="left:198.5px;top:86.00px;font-size:14.5px;letter-spacing:-0.174px;color:#444">14:20</div>
<div class="abs" style="left:29.9px;top:117.4px;width:25.2px;height:25.2px;border:1.4px solid #e3b920;border-radius:50%;background:#fff"></div>
<div class="t" style="left:29.9px;width:25.2px;text-align:center;top:123px;font-size:14px;color:#e1b313">3</div>
<div class="t" style="left:70.2px;top:124.00px;font-size:14.5px;letter-spacing:0.859px;color:#444">41</div>
<div class="t" style="left:198.5px;top:122.00px;font-size:14.5px;letter-spacing:-0.174px;color:#444">14:50</div>
<div class="abs" style="left:12.8px;top:53.5px;width:9.2px;height:9.2px;border-radius:50%;background:#0b9a0b"></div>
<svg class="abs" style="left:328px;top:15.6px" width="17" height="16" viewBox="0 0 17 16"><path d="M1.8 1.8 H14.6 V13.8 L12 11.4 H1.8 Z" fill="none" stroke="#5f97a8" stroke-width="1.5" stroke-linejoin="round"/><path d="M4 5 H11.6 M4 7.8 H8.2" stroke="#5f97a8" stroke-width="1.3"/></svg>
<svg class="abs" style="left:171px;top:167.6px" width="19" height="10" viewBox="0 0 19 10"><path d="M0.5 0 L9.5 8.6 L18.5 0 Z" fill="#fff"/></svg>
</div>

</body></html>
